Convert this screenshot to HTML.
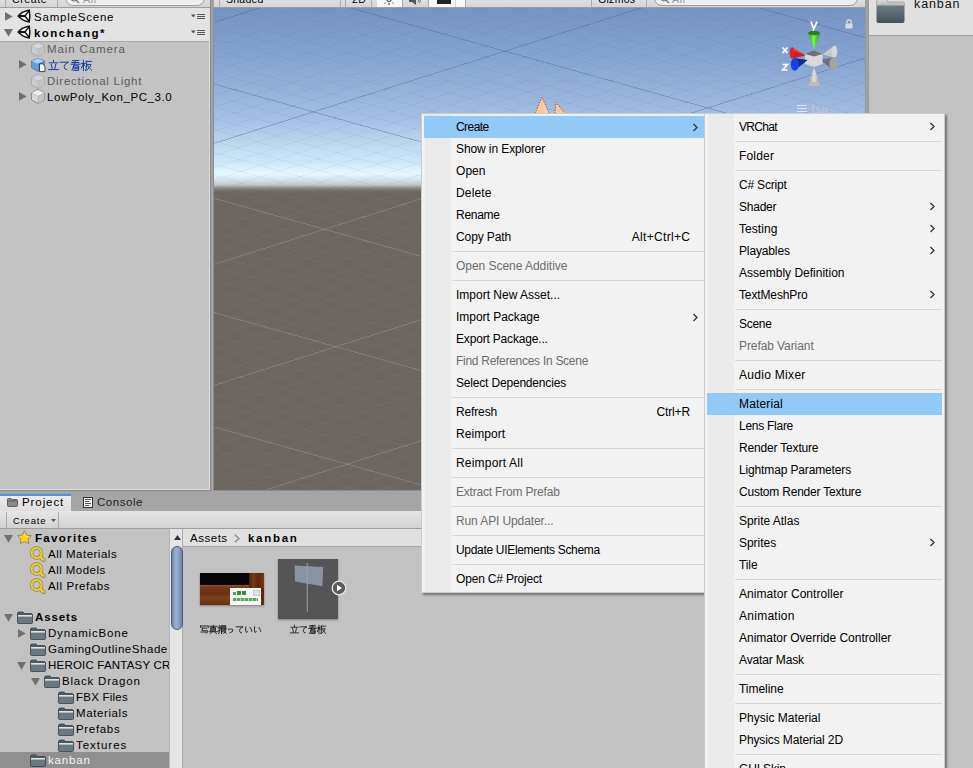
<!DOCTYPE html>
<html><head><meta charset="utf-8"><style>
*{margin:0;padding:0;box-sizing:border-box}
html,body{width:973px;height:768px;overflow:hidden;background:#A2A2A2;font-family:"Liberation Sans",sans-serif;font-size:11px;color:#000;position:relative}
.a{position:absolute}
.t{position:absolute;white-space:nowrap;font-size:11.5px;letter-spacing:0.75px;line-height:16px;height:16px}
.b{font-weight:bold;letter-spacing:1.25px}
.menu{position:absolute;background:#F2F2F2;border:1px solid #CCCCCC;box-shadow:2px 2px 2px rgba(0,0,0,0.4)}
.mi{position:absolute;height:22px;font-size:12px;line-height:22px;color:#000;white-space:nowrap;letter-spacing:-0.15px}
.mi .tx{position:absolute;left:32px;top:0}
.mi.hl{background:#91C9F7}
.mi.dis{color:#6D6D6D}
.mi .sc{position:absolute;right:15px;top:0}
.mi svg{position:absolute;right:5px;top:7px}
.sep{position:absolute;height:1px;background:#D7D7D7}
svg.i{position:absolute;overflow:visible}
</style></head><body>
<div class="a" style="left:0px;top:0px;width:210px;height:8px;background:linear-gradient(#dfdfdf,#d3d3d3);border-bottom:1px solid #9d9d9d"></div>
<div class="a" style="left:5px;top:0px;width:1px;height:7px;background:#aaa"></div>
<div class="a" style="left:57px;top:0px;width:1px;height:7px;background:#aaa"></div>
<div class="t" style="left:12px;top:-9px;font-size:10.5px;letter-spacing:0.6px">Create</div>
<div class="a" style="left:65px;top:-12px;width:140px;height:18px;background:#eeeeee;border:1px solid #a0a0a0;border-radius:8px"></div>
<div class="t" style="left:83px;top:-9px;color:#9a9a9a;font-size:10.5px">All</div>
<svg class="i" style="left:70px;top:-6px" width="10" height="10" viewBox="0 0 10 10" ><circle cx="4" cy="4" r="3" fill="none" stroke="#777" stroke-width="1.2"/><path d="M6 6 L9 9" stroke="#777" stroke-width="1.3"/></svg>
<div class="a" style="left:214px;top:0px;width:651px;height:8px;background:linear-gradient(#dfdfdf,#d3d3d3);border-bottom:1px solid #9d9d9d"></div>
<div class="a" style="left:219px;top:0px;width:1px;height:7px;background:#a9a9a9"></div>
<div class="a" style="left:340px;top:0px;width:1px;height:7px;background:#a9a9a9"></div>
<div class="a" style="left:345px;top:0px;width:1px;height:7px;background:#a9a9a9"></div>
<div class="a" style="left:371px;top:0px;width:1px;height:7px;background:#a9a9a9"></div>
<div class="a" style="left:402px;top:0px;width:1px;height:7px;background:#a9a9a9"></div>
<div class="a" style="left:428px;top:0px;width:1px;height:7px;background:#a9a9a9"></div>
<div class="a" style="left:465px;top:0px;width:1px;height:7px;background:#a9a9a9"></div>
<div class="a" style="left:591px;top:0px;width:1px;height:7px;background:#a9a9a9"></div>
<div class="a" style="left:646px;top:0px;width:1px;height:7px;background:#a9a9a9"></div>
<div class="t" style="left:226px;top:-9px;font-size:10.5px;letter-spacing:0.25px">Shaded</div>
<div class="t" style="left:352px;top:-9px;font-size:10.5px;letter-spacing:0.5px">2D</div>
<div class="a" style="left:377px;top:0px;width:25px;height:7px;background:#f7f7f7"></div>
<svg class="i" style="left:383px;top:-4px" width="12" height="10" viewBox="0 0 12 10" ><circle cx="6" cy="3" r="2.5" fill="none" stroke="#333" stroke-width="1"/><path d="M6 7V9 M1 3H0 M12 3H11 M2.5 6.5L1.5 7.5 M9.5 6.5L10.5 7.5" stroke="#333" stroke-width="1"/></svg>
<svg class="i" style="left:408px;top:-4px" width="14" height="10" viewBox="0 0 14 10" ><path d="M1 0 H4 L8 -3 V9 L4 6 H1Z" fill="#555"/><path d="M10 0 Q12 3 10 6 M11.5 -1 Q14 3 11.5 7" stroke="#777" fill="none" stroke-width="1"/></svg>
<div class="a" style="left:429px;top:0px;width:36px;height:7px;background:#f7f7f7"></div>
<div class="a" style="left:437px;top:0px;width:14px;height:4px;background:#222"></div>
<div class="a" style="left:455px;top:0px;width:1px;height:7px;background:#d8d8d8"></div>
<div class="t" style="left:598px;top:-9px;font-size:10.5px;letter-spacing:0.3px">Gizmos</div>
<div class="a" style="left:654px;top:-12px;width:204px;height:18px;background:#eeeeee;border:1px solid #a0a0a0;border-radius:8px"></div>
<svg class="i" style="left:660px;top:-6px" width="10" height="10" viewBox="0 0 10 10" ><circle cx="4" cy="4" r="3" fill="none" stroke="#777" stroke-width="1.2"/><path d="M6 6 L9 9" stroke="#777" stroke-width="1.3"/></svg>
<div class="t" style="left:672px;top:-9px;color:#9a9a9a;font-size:10.5px">All</div>
<div class="a" style="left:0px;top:8px;width:210px;height:482px;background:#C3C3C3"></div>
<div class="a" style="left:0px;top:8px;width:210px;height:33px;background:#E3E3E3"></div>
<div class="a" style="left:0px;top:41px;width:210px;height:1px;background:#A9A9A9"></div>
<div class="a" style="left:209px;top:8px;width:1px;height:481px;background:#DCDCDC"></div>
<div class="a" style="left:0px;top:489px;width:210px;height:1px;background:#DCDCDC"></div>
<svg class="i" style="left:5px;top:12px" width="8" height="9" viewBox="0 0 8 9" ><path d="M0 0 L7.7 4.4 L0 8.8Z" fill="#707070"/></svg>
<svg class="i" style="left:17px;top:9px" width="14" height="14" viewBox="0 0 14 14" ><path d="M0.2 7 Q4.5 1.5 12.9 0.2 Q14.3 7 12.9 13.8 Q4.5 12.5 0.2 7Z" fill="#111"/><path d="M3.2 6.1 L7.7 6.1 L10.9 2.3 Q6.2 3 3.2 6.1Z" fill="#fff"/><path d="M3.2 7.9 L7.7 7.9 L10.9 11.7 Q6.2 11 3.2 7.9Z" fill="#fff"/><path d="M8.9 7 L11.7 3.2 Q12.5 7 11.7 10.8Z" fill="#fff"/></svg>
<div class="t" style="left:34px;top:9px;letter-spacing:0.9px;letter-spacing:0.790px">SampleScene</div>
<svg class="i" style="left:4px;top:29px" width="9" height="8" viewBox="0 0 9 8" ><path d="M0 0 L9 0 L4.5 7.8Z" fill="#707070"/></svg>
<svg class="i" style="left:17px;top:25px" width="14" height="14" viewBox="0 0 14 14" ><path d="M0.2 7 Q4.5 1.5 12.9 0.2 Q14.3 7 12.9 13.8 Q4.5 12.5 0.2 7Z" fill="#111"/><path d="M3.2 6.1 L7.7 6.1 L10.9 2.3 Q6.2 3 3.2 6.1Z" fill="#fff"/><path d="M3.2 7.9 L7.7 7.9 L10.9 11.7 Q6.2 11 3.2 7.9Z" fill="#fff"/><path d="M8.9 7 L11.7 3.2 Q12.5 7 11.7 10.8Z" fill="#fff"/></svg>
<div class="t b" style="left:34px;top:25px;letter-spacing:1.65px;letter-spacing:1.450px">konchang*</div>
<svg class="i" style="left:191px;top:14px" width="5" height="4" viewBox="0 0 5 4" ><path d="M0 0.6 H4.6 L2.3 3.6Z" fill="#555"/></svg>
<div class="a" style="left:197px;top:14px;width:8px;height:1px;background:#585858"></div>
<div class="a" style="left:197px;top:16px;width:8px;height:1px;background:#585858"></div>
<div class="a" style="left:197px;top:18px;width:8px;height:1px;background:#585858"></div>
<svg class="i" style="left:191px;top:30px" width="5" height="4" viewBox="0 0 5 4" ><path d="M0 0.6 H4.6 L2.3 3.6Z" fill="#555"/></svg>
<div class="a" style="left:197px;top:30px;width:8px;height:1px;background:#585858"></div>
<div class="a" style="left:197px;top:32px;width:8px;height:1px;background:#585858"></div>
<div class="a" style="left:197px;top:34px;width:8px;height:1px;background:#585858"></div>
<svg class="i" style="left:31px;top:42px" width="14" height="15" viewBox="0 0 14 15" ><g opacity="0.45"><path d="M7 0.5 L13.5 3.8 L13.5 11 L7 14.5 L0.5 11 L0.5 3.8Z" fill="#d9d9d9" stroke="#8c8c8c" stroke-width="1"/><path d="M0.8 4 L7 7.2 L13.2 4 L7 0.9Z" fill="#efefef"/><path d="M7 7.2 L13.2 4 L13.2 10.9 L7 14.1Z" fill="#c4c4c4"/><path d="M0.8 4 L7 7.2 L13.2 4 M7 7.2 V14" stroke="#a8a8a8" stroke-width="0.6" fill="none"/></g></svg>
<div class="t" style="left:47px;top:41px;color:#5c5c5c;letter-spacing:0.880px">Main Camera</div>
<svg class="i" style="left:19px;top:60px" width="8" height="9" viewBox="0 0 8 9" ><path d="M0 0 L7.7 4.4 L0 8.8Z" fill="#707070"/></svg>
<svg class="i" style="left:31px;top:57px" width="14" height="15" viewBox="0 0 14 15" ><path d="M7 1.5 L13.5 3.8 L13.5 11 L7 14.5 L0.5 11 L0.5 3.8Z" fill="#5ca2e2" stroke="#6f7f90" stroke-width="0.9"/><path d="M0.8 4 L7 6.8 L13.2 4 L7 1.7Z" fill="#a8d6fb"/><path d="M7 6.8 L13.2 4 L13.2 10.9 L7 14.1Z" fill="#4d8fd6"/><path d="M8.5 6.8 H11.6 L14 9.2 V14.6 H8.5Z" fill="#f2f4f4" stroke="#444" stroke-width="1"/></svg>
<svg class="i" style="left:48px;top:60px" width="46" height="12" viewBox="0 0 46 12" ><path transform="translate(0.00,0) scale(1.000)" d="M5.5 0.3V2 M1.2 2.8H9.8 M3.2 4.4L4.2 8.6 M7.8 4.4L6.8 8.6 M0.6 9.6H10.4" fill="none" stroke="#1c3ea4" stroke-width="1.0" stroke-linecap="square"/><path transform="translate(11.00,0) scale(1.000)" d="M1.2 2.2H9.6 Q5.6 3.4 5.2 6.5 Q5 9.4 7.6 9.8" fill="none" stroke="#1c3ea4" stroke-width="1.0" stroke-linecap="square"/><path transform="translate(22.00,0) scale(1.000)" d="M2.4 0.8L8.8 0.4 M2 2.5H9 M1 4.2H10 M5.6 1L2 10.4 M3.8 5.8H8.6V10.4H3.8 M3.8 7.3H8.6 M3.8 8.8H8.6" fill="none" stroke="#1c3ea4" stroke-width="1.0" stroke-linecap="square"/><path transform="translate(33.00,0) scale(1.000)" d="M0.4 3.4H4.4 M2.4 0.4V10.6 M2.4 3.8L0.4 8 M2.6 4L4.4 6.2 M5 1.4H10.6 M5.6 1.4V5.6Q5.5 8.5 4.6 10.4 M5.8 4.6H10Q9 8 5.6 10.4 M6.8 5.8Q8.6 8.6 10.6 10.2" fill="none" stroke="#1c3ea4" stroke-width="1.0" stroke-linecap="square"/></svg>
<svg class="i" style="left:31px;top:74px" width="14" height="15" viewBox="0 0 14 15" ><g opacity="0.45"><path d="M7 0.5 L13.5 3.8 L13.5 11 L7 14.5 L0.5 11 L0.5 3.8Z" fill="#d9d9d9" stroke="#8c8c8c" stroke-width="1"/><path d="M0.8 4 L7 7.2 L13.2 4 L7 0.9Z" fill="#efefef"/><path d="M7 7.2 L13.2 4 L13.2 10.9 L7 14.1Z" fill="#c4c4c4"/><path d="M0.8 4 L7 7.2 L13.2 4 M7 7.2 V14" stroke="#a8a8a8" stroke-width="0.6" fill="none"/></g></svg>
<div class="t" style="left:47px;top:73px;color:#5c5c5c;letter-spacing:0.750px">Directional Light</div>
<svg class="i" style="left:19px;top:92px" width="8" height="9" viewBox="0 0 8 9" ><path d="M0 0 L7.7 4.4 L0 8.8Z" fill="#707070"/></svg>
<svg class="i" style="left:31px;top:89px" width="14" height="15" viewBox="0 0 14 15" ><g opacity="1"><path d="M7 0.5 L13.5 3.8 L13.5 11 L7 14.5 L0.5 11 L0.5 3.8Z" fill="#d9d9d9" stroke="#8c8c8c" stroke-width="1"/><path d="M0.8 4 L7 7.2 L13.2 4 L7 0.9Z" fill="#efefef"/><path d="M7 7.2 L13.2 4 L13.2 10.9 L7 14.1Z" fill="#c4c4c4"/><path d="M0.8 4 L7 7.2 L13.2 4 M7 7.2 V14" stroke="#a8a8a8" stroke-width="0.6" fill="none"/></g></svg>
<div class="t" style="left:47px;top:89px;;letter-spacing:0.565px">LowPoly_Kon_PC_3.0</div>
<div class="a" style="left:214px;top:8px;width:651px;height:482px;overflow:hidden;background:linear-gradient(#7694c3 0px,#86a4d2 52px,#a4c0e4 112px,#c4dcf4 142px,#cce4f8 152px,#e6f8ff 166px,#dceaf0 170px,#ccd8dc 174px,#bcc6c8 177px,#9c9c9c 179px,#847e7a 181px,#716c68 183px,#6c6661 185px,#6c6661 482px)">
<svg width="651" height="482" style="position:absolute;left:0;top:0"><defs><clipPath id="csky"><rect x="0" y="0" width="651" height="179"/></clipPath><clipPath id="cgnd"><rect x="0" y="179" width="651" height="320"/></clipPath></defs>
<g clip-path="url(#csky)">
<g stroke="#475a78" stroke-width="1" opacity="0.06" shape-rendering="crispEdges"><line x1="0" y1="-1398.47" x2="651" y2="-1216.19"/><line x1="0" y1="-1387.04" x2="651" y2="-1204.76"/><line x1="0" y1="-1375.61" x2="651" y2="-1193.33"/><line x1="0" y1="-1364.18" x2="651" y2="-1181.90"/><line x1="0" y1="-1352.75" x2="651" y2="-1170.47"/><line x1="0" y1="-1341.32" x2="651" y2="-1159.04"/><line x1="0" y1="-1329.89" x2="651" y2="-1147.61"/><line x1="0" y1="-1318.46" x2="651" y2="-1136.18"/><line x1="0" y1="-1307.03" x2="651" y2="-1124.75"/><line x1="0" y1="-1284.17" x2="651" y2="-1101.89"/><line x1="0" y1="-1272.74" x2="651" y2="-1090.46"/><line x1="0" y1="-1261.31" x2="651" y2="-1079.03"/><line x1="0" y1="-1249.88" x2="651" y2="-1067.60"/><line x1="0" y1="-1238.45" x2="651" y2="-1056.17"/><line x1="0" y1="-1227.02" x2="651" y2="-1044.74"/><line x1="0" y1="-1215.59" x2="651" y2="-1033.31"/><line x1="0" y1="-1204.16" x2="651" y2="-1021.88"/><line x1="0" y1="-1192.73" x2="651" y2="-1010.45"/><line x1="0" y1="-1169.87" x2="651" y2="-987.59"/><line x1="0" y1="-1158.44" x2="651" y2="-976.16"/><line x1="0" y1="-1147.01" x2="651" y2="-964.73"/><line x1="0" y1="-1135.58" x2="651" y2="-953.30"/><line x1="0" y1="-1124.15" x2="651" y2="-941.87"/><line x1="0" y1="-1112.72" x2="651" y2="-930.44"/><line x1="0" y1="-1101.29" x2="651" y2="-919.01"/><line x1="0" y1="-1089.86" x2="651" y2="-907.58"/><line x1="0" y1="-1078.43" x2="651" y2="-896.15"/><line x1="0" y1="-1055.57" x2="651" y2="-873.29"/><line x1="0" y1="-1044.14" x2="651" y2="-861.86"/><line x1="0" y1="-1032.71" x2="651" y2="-850.43"/><line x1="0" y1="-1021.28" x2="651" y2="-839.00"/><line x1="0" y1="-1009.85" x2="651" y2="-827.57"/><line x1="0" y1="-998.42" x2="651" y2="-816.14"/><line x1="0" y1="-986.99" x2="651" y2="-804.71"/><line x1="0" y1="-975.56" x2="651" y2="-793.28"/><line x1="0" y1="-964.13" x2="651" y2="-781.85"/><line x1="0" y1="-941.27" x2="651" y2="-758.99"/><line x1="0" y1="-929.84" x2="651" y2="-747.56"/><line x1="0" y1="-918.41" x2="651" y2="-736.13"/><line x1="0" y1="-906.98" x2="651" y2="-724.70"/><line x1="0" y1="-895.55" x2="651" y2="-713.27"/><line x1="0" y1="-884.12" x2="651" y2="-701.84"/><line x1="0" y1="-872.69" x2="651" y2="-690.41"/><line x1="0" y1="-861.26" x2="651" y2="-678.98"/><line x1="0" y1="-849.83" x2="651" y2="-667.55"/><line x1="0" y1="-826.97" x2="651" y2="-644.69"/><line x1="0" y1="-815.54" x2="651" y2="-633.26"/><line x1="0" y1="-804.11" x2="651" y2="-621.83"/><line x1="0" y1="-792.68" x2="651" y2="-610.40"/><line x1="0" y1="-781.25" x2="651" y2="-598.97"/><line x1="0" y1="-769.82" x2="651" y2="-587.54"/><line x1="0" y1="-758.39" x2="651" y2="-576.11"/><line x1="0" y1="-746.96" x2="651" y2="-564.68"/><line x1="0" y1="-735.53" x2="651" y2="-553.25"/><line x1="0" y1="-712.67" x2="651" y2="-530.39"/><line x1="0" y1="-701.24" x2="651" y2="-518.96"/><line x1="0" y1="-689.81" x2="651" y2="-507.53"/><line x1="0" y1="-678.38" x2="651" y2="-496.10"/><line x1="0" y1="-666.95" x2="651" y2="-484.67"/><line x1="0" y1="-655.52" x2="651" y2="-473.24"/><line x1="0" y1="-644.09" x2="651" y2="-461.81"/><line x1="0" y1="-632.66" x2="651" y2="-450.38"/><line x1="0" y1="-621.23" x2="651" y2="-438.95"/><line x1="0" y1="-598.37" x2="651" y2="-416.09"/><line x1="0" y1="-586.94" x2="651" y2="-404.66"/><line x1="0" y1="-575.51" x2="651" y2="-393.23"/><line x1="0" y1="-564.08" x2="651" y2="-381.80"/><line x1="0" y1="-552.65" x2="651" y2="-370.37"/><line x1="0" y1="-541.22" x2="651" y2="-358.94"/><line x1="0" y1="-529.79" x2="651" y2="-347.51"/><line x1="0" y1="-518.36" x2="651" y2="-336.08"/><line x1="0" y1="-506.93" x2="651" y2="-324.65"/><line x1="0" y1="-484.07" x2="651" y2="-301.79"/><line x1="0" y1="-472.64" x2="651" y2="-290.36"/><line x1="0" y1="-461.21" x2="651" y2="-278.93"/><line x1="0" y1="-449.78" x2="651" y2="-267.50"/><line x1="0" y1="-438.35" x2="651" y2="-256.07"/><line x1="0" y1="-426.92" x2="651" y2="-244.64"/><line x1="0" y1="-415.49" x2="651" y2="-233.21"/><line x1="0" y1="-404.06" x2="651" y2="-221.78"/><line x1="0" y1="-392.63" x2="651" y2="-210.35"/><line x1="0" y1="-369.77" x2="651" y2="-187.49"/><line x1="0" y1="-358.34" x2="651" y2="-176.06"/><line x1="0" y1="-346.91" x2="651" y2="-164.63"/><line x1="0" y1="-335.48" x2="651" y2="-153.20"/><line x1="0" y1="-324.05" x2="651" y2="-141.77"/><line x1="0" y1="-312.62" x2="651" y2="-130.34"/><line x1="0" y1="-301.19" x2="651" y2="-118.91"/><line x1="0" y1="-289.76" x2="651" y2="-107.48"/><line x1="0" y1="-278.33" x2="651" y2="-96.05"/><line x1="0" y1="-255.47" x2="651" y2="-73.19"/><line x1="0" y1="-244.04" x2="651" y2="-61.76"/><line x1="0" y1="-232.61" x2="651" y2="-50.33"/><line x1="0" y1="-221.18" x2="651" y2="-38.90"/><line x1="0" y1="-209.75" x2="651" y2="-27.47"/><line x1="0" y1="-198.32" x2="651" y2="-16.04"/><line x1="0" y1="-186.89" x2="651" y2="-4.61"/><line x1="0" y1="-175.46" x2="651" y2="6.82"/><line x1="0" y1="-164.03" x2="651" y2="18.25"/><line x1="0" y1="-141.17" x2="651" y2="41.11"/><line x1="0" y1="-129.74" x2="651" y2="52.54"/><line x1="0" y1="-118.31" x2="651" y2="63.97"/><line x1="0" y1="-106.88" x2="651" y2="75.40"/><line x1="0" y1="-95.45" x2="651" y2="86.83"/><line x1="0" y1="-84.02" x2="651" y2="98.26"/><line x1="0" y1="-72.59" x2="651" y2="109.69"/><line x1="0" y1="-61.16" x2="651" y2="121.12"/><line x1="0" y1="-49.73" x2="651" y2="132.55"/><line x1="0" y1="-26.87" x2="651" y2="155.41"/><line x1="0" y1="-15.44" x2="651" y2="166.84"/><line x1="0" y1="-4.01" x2="651" y2="178.27"/><line x1="0" y1="7.42" x2="651" y2="189.70"/><line x1="0" y1="18.85" x2="651" y2="201.13"/><line x1="0" y1="30.28" x2="651" y2="212.56"/><line x1="0" y1="41.71" x2="651" y2="223.99"/><line x1="0" y1="53.14" x2="651" y2="235.42"/><line x1="0" y1="64.57" x2="651" y2="246.85"/><line x1="0" y1="87.43" x2="651" y2="269.71"/><line x1="0" y1="98.86" x2="651" y2="281.14"/><line x1="0" y1="110.29" x2="651" y2="292.57"/><line x1="0" y1="121.72" x2="651" y2="304.00"/><line x1="0" y1="133.15" x2="651" y2="315.43"/><line x1="0" y1="144.58" x2="651" y2="326.86"/><line x1="0" y1="156.01" x2="651" y2="338.29"/><line x1="0" y1="167.44" x2="651" y2="349.72"/><line x1="0" y1="178.87" x2="651" y2="361.15"/><line x1="0" y1="201.73" x2="651" y2="384.01"/><line x1="0" y1="213.16" x2="651" y2="395.44"/><line x1="0" y1="224.59" x2="651" y2="406.87"/><line x1="0" y1="236.02" x2="651" y2="418.30"/><line x1="0" y1="247.45" x2="651" y2="429.73"/><line x1="0" y1="258.88" x2="651" y2="441.16"/><line x1="0" y1="270.31" x2="651" y2="452.59"/><line x1="0" y1="281.74" x2="651" y2="464.02"/><line x1="0" y1="293.17" x2="651" y2="475.45"/><line x1="0" y1="316.03" x2="651" y2="498.31"/><line x1="0" y1="327.46" x2="651" y2="509.74"/><line x1="0" y1="338.89" x2="651" y2="521.17"/><line x1="0" y1="350.32" x2="651" y2="532.60"/><line x1="0" y1="361.75" x2="651" y2="544.03"/><line x1="0" y1="373.18" x2="651" y2="555.46"/><line x1="0" y1="384.61" x2="651" y2="566.89"/><line x1="0" y1="396.04" x2="651" y2="578.32"/><line x1="0" y1="407.47" x2="651" y2="589.75"/><line x1="0" y1="430.33" x2="651" y2="612.61"/><line x1="0" y1="441.76" x2="651" y2="624.04"/><line x1="0" y1="453.19" x2="651" y2="635.47"/><line x1="0" y1="464.62" x2="651" y2="646.90"/><line x1="0" y1="476.05" x2="651" y2="658.33"/><line x1="0" y1="487.48" x2="651" y2="669.76"/><line x1="0" y1="498.91" x2="651" y2="681.19"/><line x1="0" y1="510.34" x2="651" y2="692.62"/><line x1="0" y1="521.77" x2="651" y2="704.05"/><line x1="0" y1="544.63" x2="651" y2="726.91"/><line x1="0" y1="556.06" x2="651" y2="738.34"/><line x1="0" y1="567.49" x2="651" y2="749.77"/><line x1="0" y1="578.92" x2="651" y2="761.20"/><line x1="0" y1="590.35" x2="651" y2="772.63"/><line x1="0" y1="601.78" x2="651" y2="784.06"/><line x1="0" y1="613.21" x2="651" y2="795.49"/><line x1="0" y1="624.64" x2="651" y2="806.92"/><line x1="0" y1="636.07" x2="651" y2="818.35"/><line x1="0" y1="658.93" x2="651" y2="841.21"/><line x1="0" y1="670.36" x2="651" y2="852.64"/><line x1="0" y1="681.79" x2="651" y2="864.07"/><line x1="0" y1="693.22" x2="651" y2="875.50"/><line x1="0" y1="704.65" x2="651" y2="886.93"/><line x1="0" y1="716.08" x2="651" y2="898.36"/><line x1="0" y1="727.51" x2="651" y2="909.79"/><line x1="0" y1="738.94" x2="651" y2="921.22"/><line x1="0" y1="750.37" x2="651" y2="932.65"/><line x1="0" y1="773.23" x2="651" y2="955.51"/><line x1="0" y1="784.66" x2="651" y2="966.94"/><line x1="0" y1="796.09" x2="651" y2="978.37"/><line x1="0" y1="807.52" x2="651" y2="989.80"/><line x1="0" y1="818.95" x2="651" y2="1001.23"/><line x1="0" y1="830.38" x2="651" y2="1012.66"/><line x1="0" y1="841.81" x2="651" y2="1024.09"/><line x1="0" y1="853.24" x2="651" y2="1035.52"/><line x1="0" y1="864.67" x2="651" y2="1046.95"/><line x1="0" y1="887.53" x2="651" y2="1069.81"/><line x1="0" y1="898.96" x2="651" y2="1081.24"/><line x1="0" y1="910.39" x2="651" y2="1092.67"/><line x1="0" y1="921.82" x2="651" y2="1104.10"/><line x1="0" y1="933.25" x2="651" y2="1115.53"/><line x1="0" y1="944.68" x2="651" y2="1126.96"/><line x1="0" y1="956.11" x2="651" y2="1138.39"/><line x1="0" y1="967.54" x2="651" y2="1149.82"/><line x1="0" y1="978.97" x2="651" y2="1161.25"/><line x1="0" y1="1001.83" x2="651" y2="1184.11"/><line x1="0" y1="1013.26" x2="651" y2="1195.54"/><line x1="0" y1="1024.69" x2="651" y2="1206.97"/><line x1="0" y1="1036.12" x2="651" y2="1218.40"/><line x1="0" y1="1047.55" x2="651" y2="1229.83"/><line x1="0" y1="1058.98" x2="651" y2="1241.26"/><line x1="0" y1="1070.41" x2="651" y2="1252.69"/><line x1="0" y1="1081.84" x2="651" y2="1264.12"/><line x1="0" y1="1093.27" x2="651" y2="1275.55"/><line x1="0" y1="1116.13" x2="651" y2="1298.41"/><line x1="0" y1="1127.56" x2="651" y2="1309.84"/><line x1="0" y1="1138.99" x2="651" y2="1321.27"/><line x1="0" y1="1150.42" x2="651" y2="1332.70"/><line x1="0" y1="1161.85" x2="651" y2="1344.13"/><line x1="0" y1="1173.28" x2="651" y2="1355.56"/><line x1="0" y1="1184.71" x2="651" y2="1366.99"/><line x1="0" y1="1196.14" x2="651" y2="1378.42"/><line x1="0" y1="1207.57" x2="651" y2="1389.85"/><line x1="0" y1="1230.43" x2="651" y2="1412.71"/><line x1="0" y1="1241.86" x2="651" y2="1424.14"/><line x1="0" y1="1253.29" x2="651" y2="1435.57"/><line x1="0" y1="1264.72" x2="651" y2="1447.00"/><line x1="0" y1="1276.15" x2="651" y2="1458.43"/><line x1="0" y1="1287.58" x2="651" y2="1469.86"/><line x1="0" y1="1299.01" x2="651" y2="1481.29"/><line x1="0" y1="1310.44" x2="651" y2="1492.72"/><line x1="0" y1="1321.87" x2="651" y2="1504.15"/><line x1="0" y1="1344.73" x2="651" y2="1527.01"/><line x1="0" y1="1356.16" x2="651" y2="1538.44"/><line x1="0" y1="1367.59" x2="651" y2="1549.87"/><line x1="0" y1="1379.02" x2="651" y2="1561.30"/><line x1="0" y1="1390.45" x2="651" y2="1572.73"/><line x1="0" y1="1401.88" x2="651" y2="1584.16"/><line x1="0" y1="1413.31" x2="651" y2="1595.59"/><line x1="0" y1="1424.74" x2="651" y2="1607.02"/><line x1="0" y1="1436.17" x2="651" y2="1618.45"/><line x1="0" y1="1459.03" x2="651" y2="1641.31"/><line x1="0" y1="1470.46" x2="651" y2="1652.74"/><line x1="0" y1="1481.89" x2="651" y2="1664.17"/><line x1="0" y1="1493.32" x2="651" y2="1675.60"/><line x1="0" y1="1504.75" x2="651" y2="1687.03"/><line x1="0" y1="1516.18" x2="651" y2="1698.46"/><line x1="0" y1="1527.61" x2="651" y2="1709.89"/><line x1="0" y1="1539.04" x2="651" y2="1721.32"/><line x1="0" y1="1550.47" x2="651" y2="1732.75"/><line x1="0" y1="1573.33" x2="651" y2="1755.61"/><line x1="0" y1="1584.76" x2="651" y2="1767.04"/><line x1="0" y1="1596.19" x2="651" y2="1778.47"/><line x1="0" y1="1607.62" x2="651" y2="1789.90"/><line x1="0" y1="1619.05" x2="651" y2="1801.33"/><line x1="0" y1="1630.48" x2="651" y2="1812.76"/><line x1="0" y1="1641.91" x2="651" y2="1824.19"/><line x1="0" y1="1653.34" x2="651" y2="1835.62"/><line x1="0" y1="1664.77" x2="651" y2="1847.05"/><line x1="0" y1="1687.63" x2="651" y2="1869.91"/><line x1="0" y1="1699.06" x2="651" y2="1881.34"/><line x1="0" y1="1710.49" x2="651" y2="1892.77"/><line x1="0" y1="1721.92" x2="651" y2="1904.20"/><line x1="0" y1="1733.35" x2="651" y2="1915.63"/><line x1="0" y1="1744.78" x2="651" y2="1927.06"/><line x1="0" y1="1756.21" x2="651" y2="1938.49"/><line x1="0" y1="1767.64" x2="651" y2="1949.92"/><line x1="0" y1="1779.07" x2="651" y2="1961.35"/></g>
<g stroke="#475a78" stroke-width="1" opacity="0.06" shape-rendering="crispEdges"><line x1="0" y1="-1425.50" x2="651" y2="-1631.87"/><line x1="0" y1="-1413.40" x2="651" y2="-1619.77"/><line x1="0" y1="-1401.30" x2="651" y2="-1607.67"/><line x1="0" y1="-1389.20" x2="651" y2="-1595.57"/><line x1="0" y1="-1377.10" x2="651" y2="-1583.47"/><line x1="0" y1="-1365.00" x2="651" y2="-1571.37"/><line x1="0" y1="-1352.90" x2="651" y2="-1559.27"/><line x1="0" y1="-1340.80" x2="651" y2="-1547.17"/><line x1="0" y1="-1328.70" x2="651" y2="-1535.07"/><line x1="0" y1="-1304.50" x2="651" y2="-1510.87"/><line x1="0" y1="-1292.40" x2="651" y2="-1498.77"/><line x1="0" y1="-1280.30" x2="651" y2="-1486.67"/><line x1="0" y1="-1268.20" x2="651" y2="-1474.57"/><line x1="0" y1="-1256.10" x2="651" y2="-1462.47"/><line x1="0" y1="-1244.00" x2="651" y2="-1450.37"/><line x1="0" y1="-1231.90" x2="651" y2="-1438.27"/><line x1="0" y1="-1219.80" x2="651" y2="-1426.17"/><line x1="0" y1="-1207.70" x2="651" y2="-1414.07"/><line x1="0" y1="-1183.50" x2="651" y2="-1389.87"/><line x1="0" y1="-1171.40" x2="651" y2="-1377.77"/><line x1="0" y1="-1159.30" x2="651" y2="-1365.67"/><line x1="0" y1="-1147.20" x2="651" y2="-1353.57"/><line x1="0" y1="-1135.10" x2="651" y2="-1341.47"/><line x1="0" y1="-1123.00" x2="651" y2="-1329.37"/><line x1="0" y1="-1110.90" x2="651" y2="-1317.27"/><line x1="0" y1="-1098.80" x2="651" y2="-1305.17"/><line x1="0" y1="-1086.70" x2="651" y2="-1293.07"/><line x1="0" y1="-1062.50" x2="651" y2="-1268.87"/><line x1="0" y1="-1050.40" x2="651" y2="-1256.77"/><line x1="0" y1="-1038.30" x2="651" y2="-1244.67"/><line x1="0" y1="-1026.20" x2="651" y2="-1232.57"/><line x1="0" y1="-1014.10" x2="651" y2="-1220.47"/><line x1="0" y1="-1002.00" x2="651" y2="-1208.37"/><line x1="0" y1="-989.90" x2="651" y2="-1196.27"/><line x1="0" y1="-977.80" x2="651" y2="-1184.17"/><line x1="0" y1="-965.70" x2="651" y2="-1172.07"/><line x1="0" y1="-941.50" x2="651" y2="-1147.87"/><line x1="0" y1="-929.40" x2="651" y2="-1135.77"/><line x1="0" y1="-917.30" x2="651" y2="-1123.67"/><line x1="0" y1="-905.20" x2="651" y2="-1111.57"/><line x1="0" y1="-893.10" x2="651" y2="-1099.47"/><line x1="0" y1="-881.00" x2="651" y2="-1087.37"/><line x1="0" y1="-868.90" x2="651" y2="-1075.27"/><line x1="0" y1="-856.80" x2="651" y2="-1063.17"/><line x1="0" y1="-844.70" x2="651" y2="-1051.07"/><line x1="0" y1="-820.50" x2="651" y2="-1026.87"/><line x1="0" y1="-808.40" x2="651" y2="-1014.77"/><line x1="0" y1="-796.30" x2="651" y2="-1002.67"/><line x1="0" y1="-784.20" x2="651" y2="-990.57"/><line x1="0" y1="-772.10" x2="651" y2="-978.47"/><line x1="0" y1="-760.00" x2="651" y2="-966.37"/><line x1="0" y1="-747.90" x2="651" y2="-954.27"/><line x1="0" y1="-735.80" x2="651" y2="-942.17"/><line x1="0" y1="-723.70" x2="651" y2="-930.07"/><line x1="0" y1="-699.50" x2="651" y2="-905.87"/><line x1="0" y1="-687.40" x2="651" y2="-893.77"/><line x1="0" y1="-675.30" x2="651" y2="-881.67"/><line x1="0" y1="-663.20" x2="651" y2="-869.57"/><line x1="0" y1="-651.10" x2="651" y2="-857.47"/><line x1="0" y1="-639.00" x2="651" y2="-845.37"/><line x1="0" y1="-626.90" x2="651" y2="-833.27"/><line x1="0" y1="-614.80" x2="651" y2="-821.17"/><line x1="0" y1="-602.70" x2="651" y2="-809.07"/><line x1="0" y1="-578.50" x2="651" y2="-784.87"/><line x1="0" y1="-566.40" x2="651" y2="-772.77"/><line x1="0" y1="-554.30" x2="651" y2="-760.67"/><line x1="0" y1="-542.20" x2="651" y2="-748.57"/><line x1="0" y1="-530.10" x2="651" y2="-736.47"/><line x1="0" y1="-518.00" x2="651" y2="-724.37"/><line x1="0" y1="-505.90" x2="651" y2="-712.27"/><line x1="0" y1="-493.80" x2="651" y2="-700.17"/><line x1="0" y1="-481.70" x2="651" y2="-688.07"/><line x1="0" y1="-457.50" x2="651" y2="-663.87"/><line x1="0" y1="-445.40" x2="651" y2="-651.77"/><line x1="0" y1="-433.30" x2="651" y2="-639.67"/><line x1="0" y1="-421.20" x2="651" y2="-627.57"/><line x1="0" y1="-409.10" x2="651" y2="-615.47"/><line x1="0" y1="-397.00" x2="651" y2="-603.37"/><line x1="0" y1="-384.90" x2="651" y2="-591.27"/><line x1="0" y1="-372.80" x2="651" y2="-579.17"/><line x1="0" y1="-360.70" x2="651" y2="-567.07"/><line x1="0" y1="-336.50" x2="651" y2="-542.87"/><line x1="0" y1="-324.40" x2="651" y2="-530.77"/><line x1="0" y1="-312.30" x2="651" y2="-518.67"/><line x1="0" y1="-300.20" x2="651" y2="-506.57"/><line x1="0" y1="-288.10" x2="651" y2="-494.47"/><line x1="0" y1="-276.00" x2="651" y2="-482.37"/><line x1="0" y1="-263.90" x2="651" y2="-470.27"/><line x1="0" y1="-251.80" x2="651" y2="-458.17"/><line x1="0" y1="-239.70" x2="651" y2="-446.07"/><line x1="0" y1="-215.50" x2="651" y2="-421.87"/><line x1="0" y1="-203.40" x2="651" y2="-409.77"/><line x1="0" y1="-191.30" x2="651" y2="-397.67"/><line x1="0" y1="-179.20" x2="651" y2="-385.57"/><line x1="0" y1="-167.10" x2="651" y2="-373.47"/><line x1="0" y1="-155.00" x2="651" y2="-361.37"/><line x1="0" y1="-142.90" x2="651" y2="-349.27"/><line x1="0" y1="-130.80" x2="651" y2="-337.17"/><line x1="0" y1="-118.70" x2="651" y2="-325.07"/><line x1="0" y1="-94.50" x2="651" y2="-300.87"/><line x1="0" y1="-82.40" x2="651" y2="-288.77"/><line x1="0" y1="-70.30" x2="651" y2="-276.67"/><line x1="0" y1="-58.20" x2="651" y2="-264.57"/><line x1="0" y1="-46.10" x2="651" y2="-252.47"/><line x1="0" y1="-34.00" x2="651" y2="-240.37"/><line x1="0" y1="-21.90" x2="651" y2="-228.27"/><line x1="0" y1="-9.80" x2="651" y2="-216.17"/><line x1="0" y1="2.30" x2="651" y2="-204.07"/><line x1="0" y1="26.50" x2="651" y2="-179.87"/><line x1="0" y1="38.60" x2="651" y2="-167.77"/><line x1="0" y1="50.70" x2="651" y2="-155.67"/><line x1="0" y1="62.80" x2="651" y2="-143.57"/><line x1="0" y1="74.90" x2="651" y2="-131.47"/><line x1="0" y1="87.00" x2="651" y2="-119.37"/><line x1="0" y1="99.10" x2="651" y2="-107.27"/><line x1="0" y1="111.20" x2="651" y2="-95.17"/><line x1="0" y1="123.30" x2="651" y2="-83.07"/><line x1="0" y1="147.50" x2="651" y2="-58.87"/><line x1="0" y1="159.60" x2="651" y2="-46.77"/><line x1="0" y1="171.70" x2="651" y2="-34.67"/><line x1="0" y1="183.80" x2="651" y2="-22.57"/><line x1="0" y1="195.90" x2="651" y2="-10.47"/><line x1="0" y1="208.00" x2="651" y2="1.63"/><line x1="0" y1="220.10" x2="651" y2="13.73"/><line x1="0" y1="232.20" x2="651" y2="25.83"/><line x1="0" y1="244.30" x2="651" y2="37.93"/><line x1="0" y1="268.50" x2="651" y2="62.13"/><line x1="0" y1="280.60" x2="651" y2="74.23"/><line x1="0" y1="292.70" x2="651" y2="86.33"/><line x1="0" y1="304.80" x2="651" y2="98.43"/><line x1="0" y1="316.90" x2="651" y2="110.53"/><line x1="0" y1="329.00" x2="651" y2="122.63"/><line x1="0" y1="341.10" x2="651" y2="134.73"/><line x1="0" y1="353.20" x2="651" y2="146.83"/><line x1="0" y1="365.30" x2="651" y2="158.93"/><line x1="0" y1="389.50" x2="651" y2="183.13"/><line x1="0" y1="401.60" x2="651" y2="195.23"/><line x1="0" y1="413.70" x2="651" y2="207.33"/><line x1="0" y1="425.80" x2="651" y2="219.43"/><line x1="0" y1="437.90" x2="651" y2="231.53"/><line x1="0" y1="450.00" x2="651" y2="243.63"/><line x1="0" y1="462.10" x2="651" y2="255.73"/><line x1="0" y1="474.20" x2="651" y2="267.83"/><line x1="0" y1="486.30" x2="651" y2="279.93"/><line x1="0" y1="510.50" x2="651" y2="304.13"/><line x1="0" y1="522.60" x2="651" y2="316.23"/><line x1="0" y1="534.70" x2="651" y2="328.33"/><line x1="0" y1="546.80" x2="651" y2="340.43"/><line x1="0" y1="558.90" x2="651" y2="352.53"/><line x1="0" y1="571.00" x2="651" y2="364.63"/><line x1="0" y1="583.10" x2="651" y2="376.73"/><line x1="0" y1="595.20" x2="651" y2="388.83"/><line x1="0" y1="607.30" x2="651" y2="400.93"/><line x1="0" y1="631.50" x2="651" y2="425.13"/><line x1="0" y1="643.60" x2="651" y2="437.23"/><line x1="0" y1="655.70" x2="651" y2="449.33"/><line x1="0" y1="667.80" x2="651" y2="461.43"/><line x1="0" y1="679.90" x2="651" y2="473.53"/><line x1="0" y1="692.00" x2="651" y2="485.63"/><line x1="0" y1="704.10" x2="651" y2="497.73"/><line x1="0" y1="716.20" x2="651" y2="509.83"/><line x1="0" y1="728.30" x2="651" y2="521.93"/><line x1="0" y1="752.50" x2="651" y2="546.13"/><line x1="0" y1="764.60" x2="651" y2="558.23"/><line x1="0" y1="776.70" x2="651" y2="570.33"/><line x1="0" y1="788.80" x2="651" y2="582.43"/><line x1="0" y1="800.90" x2="651" y2="594.53"/><line x1="0" y1="813.00" x2="651" y2="606.63"/><line x1="0" y1="825.10" x2="651" y2="618.73"/><line x1="0" y1="837.20" x2="651" y2="630.83"/><line x1="0" y1="849.30" x2="651" y2="642.93"/><line x1="0" y1="873.50" x2="651" y2="667.13"/><line x1="0" y1="885.60" x2="651" y2="679.23"/><line x1="0" y1="897.70" x2="651" y2="691.33"/><line x1="0" y1="909.80" x2="651" y2="703.43"/><line x1="0" y1="921.90" x2="651" y2="715.53"/><line x1="0" y1="934.00" x2="651" y2="727.63"/><line x1="0" y1="946.10" x2="651" y2="739.73"/><line x1="0" y1="958.20" x2="651" y2="751.83"/><line x1="0" y1="970.30" x2="651" y2="763.93"/><line x1="0" y1="994.50" x2="651" y2="788.13"/><line x1="0" y1="1006.60" x2="651" y2="800.23"/><line x1="0" y1="1018.70" x2="651" y2="812.33"/><line x1="0" y1="1030.80" x2="651" y2="824.43"/><line x1="0" y1="1042.90" x2="651" y2="836.53"/><line x1="0" y1="1055.00" x2="651" y2="848.63"/><line x1="0" y1="1067.10" x2="651" y2="860.73"/><line x1="0" y1="1079.20" x2="651" y2="872.83"/><line x1="0" y1="1091.30" x2="651" y2="884.93"/><line x1="0" y1="1115.50" x2="651" y2="909.13"/><line x1="0" y1="1127.60" x2="651" y2="921.23"/><line x1="0" y1="1139.70" x2="651" y2="933.33"/><line x1="0" y1="1151.80" x2="651" y2="945.43"/><line x1="0" y1="1163.90" x2="651" y2="957.53"/><line x1="0" y1="1176.00" x2="651" y2="969.63"/><line x1="0" y1="1188.10" x2="651" y2="981.73"/><line x1="0" y1="1200.20" x2="651" y2="993.83"/><line x1="0" y1="1212.30" x2="651" y2="1005.93"/><line x1="0" y1="1236.50" x2="651" y2="1030.13"/><line x1="0" y1="1248.60" x2="651" y2="1042.23"/><line x1="0" y1="1260.70" x2="651" y2="1054.33"/><line x1="0" y1="1272.80" x2="651" y2="1066.43"/><line x1="0" y1="1284.90" x2="651" y2="1078.53"/><line x1="0" y1="1297.00" x2="651" y2="1090.63"/><line x1="0" y1="1309.10" x2="651" y2="1102.73"/><line x1="0" y1="1321.20" x2="651" y2="1114.83"/><line x1="0" y1="1333.30" x2="651" y2="1126.93"/><line x1="0" y1="1357.50" x2="651" y2="1151.13"/><line x1="0" y1="1369.60" x2="651" y2="1163.23"/><line x1="0" y1="1381.70" x2="651" y2="1175.33"/><line x1="0" y1="1393.80" x2="651" y2="1187.43"/><line x1="0" y1="1405.90" x2="651" y2="1199.53"/><line x1="0" y1="1418.00" x2="651" y2="1211.63"/><line x1="0" y1="1430.10" x2="651" y2="1223.73"/><line x1="0" y1="1442.20" x2="651" y2="1235.83"/><line x1="0" y1="1454.30" x2="651" y2="1247.93"/><line x1="0" y1="1478.50" x2="651" y2="1272.13"/><line x1="0" y1="1490.60" x2="651" y2="1284.23"/><line x1="0" y1="1502.70" x2="651" y2="1296.33"/><line x1="0" y1="1514.80" x2="651" y2="1308.43"/><line x1="0" y1="1526.90" x2="651" y2="1320.53"/><line x1="0" y1="1539.00" x2="651" y2="1332.63"/><line x1="0" y1="1551.10" x2="651" y2="1344.73"/><line x1="0" y1="1563.20" x2="651" y2="1356.83"/><line x1="0" y1="1575.30" x2="651" y2="1368.93"/><line x1="0" y1="1599.50" x2="651" y2="1393.13"/><line x1="0" y1="1611.60" x2="651" y2="1405.23"/><line x1="0" y1="1623.70" x2="651" y2="1417.33"/><line x1="0" y1="1635.80" x2="651" y2="1429.43"/><line x1="0" y1="1647.90" x2="651" y2="1441.53"/><line x1="0" y1="1660.00" x2="651" y2="1453.63"/><line x1="0" y1="1672.10" x2="651" y2="1465.73"/><line x1="0" y1="1684.20" x2="651" y2="1477.83"/><line x1="0" y1="1696.30" x2="651" y2="1489.93"/><line x1="0" y1="1720.50" x2="651" y2="1514.13"/><line x1="0" y1="1732.60" x2="651" y2="1526.23"/><line x1="0" y1="1744.70" x2="651" y2="1538.33"/><line x1="0" y1="1756.80" x2="651" y2="1550.43"/><line x1="0" y1="1768.90" x2="651" y2="1562.53"/><line x1="0" y1="1781.00" x2="651" y2="1574.63"/><line x1="0" y1="1793.10" x2="651" y2="1586.73"/><line x1="0" y1="1805.20" x2="651" y2="1598.83"/><line x1="0" y1="1817.30" x2="651" y2="1610.93"/><line x1="0" y1="1841.50" x2="651" y2="1635.13"/><line x1="0" y1="1853.60" x2="651" y2="1647.23"/><line x1="0" y1="1865.70" x2="651" y2="1659.33"/><line x1="0" y1="1877.80" x2="651" y2="1671.43"/><line x1="0" y1="1889.90" x2="651" y2="1683.53"/><line x1="0" y1="1902.00" x2="651" y2="1695.63"/><line x1="0" y1="1914.10" x2="651" y2="1707.73"/><line x1="0" y1="1926.20" x2="651" y2="1719.83"/><line x1="0" y1="1938.30" x2="651" y2="1731.93"/></g>
<g stroke="#475a78" stroke-width="1" opacity="0.32" shape-rendering="crispEdges"><line x1="0" y1="-1409.90" x2="651" y2="-1227.62"/><line x1="0" y1="-1295.60" x2="651" y2="-1113.32"/><line x1="0" y1="-1181.30" x2="651" y2="-999.02"/><line x1="0" y1="-1067.00" x2="651" y2="-884.72"/><line x1="0" y1="-952.70" x2="651" y2="-770.42"/><line x1="0" y1="-838.40" x2="651" y2="-656.12"/><line x1="0" y1="-724.10" x2="651" y2="-541.82"/><line x1="0" y1="-609.80" x2="651" y2="-427.52"/><line x1="0" y1="-495.50" x2="651" y2="-313.22"/><line x1="0" y1="-381.20" x2="651" y2="-198.92"/><line x1="0" y1="-266.90" x2="651" y2="-84.62"/><line x1="0" y1="-152.60" x2="651" y2="29.68"/><line x1="0" y1="-38.30" x2="651" y2="143.98"/><line x1="0" y1="76.00" x2="651" y2="258.28"/><line x1="0" y1="190.30" x2="651" y2="372.58"/><line x1="0" y1="304.60" x2="651" y2="486.88"/><line x1="0" y1="418.90" x2="651" y2="601.18"/><line x1="0" y1="533.20" x2="651" y2="715.48"/><line x1="0" y1="647.50" x2="651" y2="829.78"/><line x1="0" y1="761.80" x2="651" y2="944.08"/><line x1="0" y1="876.10" x2="651" y2="1058.38"/><line x1="0" y1="990.40" x2="651" y2="1172.68"/><line x1="0" y1="1104.70" x2="651" y2="1286.98"/><line x1="0" y1="1219.00" x2="651" y2="1401.28"/><line x1="0" y1="1333.30" x2="651" y2="1515.58"/><line x1="0" y1="1447.60" x2="651" y2="1629.88"/><line x1="0" y1="1561.90" x2="651" y2="1744.18"/><line x1="0" y1="1676.20" x2="651" y2="1858.48"/></g>
<g stroke="#475a78" stroke-width="1" opacity="0.32" shape-rendering="crispEdges"><line x1="0" y1="-1437.60" x2="651" y2="-1643.97"/><line x1="0" y1="-1316.60" x2="651" y2="-1522.97"/><line x1="0" y1="-1195.60" x2="651" y2="-1401.97"/><line x1="0" y1="-1074.60" x2="651" y2="-1280.97"/><line x1="0" y1="-953.60" x2="651" y2="-1159.97"/><line x1="0" y1="-832.60" x2="651" y2="-1038.97"/><line x1="0" y1="-711.60" x2="651" y2="-917.97"/><line x1="0" y1="-590.60" x2="651" y2="-796.97"/><line x1="0" y1="-469.60" x2="651" y2="-675.97"/><line x1="0" y1="-348.60" x2="651" y2="-554.97"/><line x1="0" y1="-227.60" x2="651" y2="-433.97"/><line x1="0" y1="-106.60" x2="651" y2="-312.97"/><line x1="0" y1="14.40" x2="651" y2="-191.97"/><line x1="0" y1="135.40" x2="651" y2="-70.97"/><line x1="0" y1="256.40" x2="651" y2="50.03"/><line x1="0" y1="377.40" x2="651" y2="171.03"/><line x1="0" y1="498.40" x2="651" y2="292.03"/><line x1="0" y1="619.40" x2="651" y2="413.03"/><line x1="0" y1="740.40" x2="651" y2="534.03"/><line x1="0" y1="861.40" x2="651" y2="655.03"/><line x1="0" y1="982.40" x2="651" y2="776.03"/><line x1="0" y1="1103.40" x2="651" y2="897.03"/><line x1="0" y1="1224.40" x2="651" y2="1018.03"/><line x1="0" y1="1345.40" x2="651" y2="1139.03"/><line x1="0" y1="1466.40" x2="651" y2="1260.03"/><line x1="0" y1="1587.40" x2="651" y2="1381.03"/><line x1="0" y1="1708.40" x2="651" y2="1502.03"/><line x1="0" y1="1829.40" x2="651" y2="1623.03"/></g>
</g><g clip-path="url(#cgnd)">
<g stroke="#c8c8c8" stroke-width="1" opacity="0.04" shape-rendering="crispEdges"><line x1="0" y1="-1398.47" x2="651" y2="-1216.19"/><line x1="0" y1="-1387.04" x2="651" y2="-1204.76"/><line x1="0" y1="-1375.61" x2="651" y2="-1193.33"/><line x1="0" y1="-1364.18" x2="651" y2="-1181.90"/><line x1="0" y1="-1352.75" x2="651" y2="-1170.47"/><line x1="0" y1="-1341.32" x2="651" y2="-1159.04"/><line x1="0" y1="-1329.89" x2="651" y2="-1147.61"/><line x1="0" y1="-1318.46" x2="651" y2="-1136.18"/><line x1="0" y1="-1307.03" x2="651" y2="-1124.75"/><line x1="0" y1="-1284.17" x2="651" y2="-1101.89"/><line x1="0" y1="-1272.74" x2="651" y2="-1090.46"/><line x1="0" y1="-1261.31" x2="651" y2="-1079.03"/><line x1="0" y1="-1249.88" x2="651" y2="-1067.60"/><line x1="0" y1="-1238.45" x2="651" y2="-1056.17"/><line x1="0" y1="-1227.02" x2="651" y2="-1044.74"/><line x1="0" y1="-1215.59" x2="651" y2="-1033.31"/><line x1="0" y1="-1204.16" x2="651" y2="-1021.88"/><line x1="0" y1="-1192.73" x2="651" y2="-1010.45"/><line x1="0" y1="-1169.87" x2="651" y2="-987.59"/><line x1="0" y1="-1158.44" x2="651" y2="-976.16"/><line x1="0" y1="-1147.01" x2="651" y2="-964.73"/><line x1="0" y1="-1135.58" x2="651" y2="-953.30"/><line x1="0" y1="-1124.15" x2="651" y2="-941.87"/><line x1="0" y1="-1112.72" x2="651" y2="-930.44"/><line x1="0" y1="-1101.29" x2="651" y2="-919.01"/><line x1="0" y1="-1089.86" x2="651" y2="-907.58"/><line x1="0" y1="-1078.43" x2="651" y2="-896.15"/><line x1="0" y1="-1055.57" x2="651" y2="-873.29"/><line x1="0" y1="-1044.14" x2="651" y2="-861.86"/><line x1="0" y1="-1032.71" x2="651" y2="-850.43"/><line x1="0" y1="-1021.28" x2="651" y2="-839.00"/><line x1="0" y1="-1009.85" x2="651" y2="-827.57"/><line x1="0" y1="-998.42" x2="651" y2="-816.14"/><line x1="0" y1="-986.99" x2="651" y2="-804.71"/><line x1="0" y1="-975.56" x2="651" y2="-793.28"/><line x1="0" y1="-964.13" x2="651" y2="-781.85"/><line x1="0" y1="-941.27" x2="651" y2="-758.99"/><line x1="0" y1="-929.84" x2="651" y2="-747.56"/><line x1="0" y1="-918.41" x2="651" y2="-736.13"/><line x1="0" y1="-906.98" x2="651" y2="-724.70"/><line x1="0" y1="-895.55" x2="651" y2="-713.27"/><line x1="0" y1="-884.12" x2="651" y2="-701.84"/><line x1="0" y1="-872.69" x2="651" y2="-690.41"/><line x1="0" y1="-861.26" x2="651" y2="-678.98"/><line x1="0" y1="-849.83" x2="651" y2="-667.55"/><line x1="0" y1="-826.97" x2="651" y2="-644.69"/><line x1="0" y1="-815.54" x2="651" y2="-633.26"/><line x1="0" y1="-804.11" x2="651" y2="-621.83"/><line x1="0" y1="-792.68" x2="651" y2="-610.40"/><line x1="0" y1="-781.25" x2="651" y2="-598.97"/><line x1="0" y1="-769.82" x2="651" y2="-587.54"/><line x1="0" y1="-758.39" x2="651" y2="-576.11"/><line x1="0" y1="-746.96" x2="651" y2="-564.68"/><line x1="0" y1="-735.53" x2="651" y2="-553.25"/><line x1="0" y1="-712.67" x2="651" y2="-530.39"/><line x1="0" y1="-701.24" x2="651" y2="-518.96"/><line x1="0" y1="-689.81" x2="651" y2="-507.53"/><line x1="0" y1="-678.38" x2="651" y2="-496.10"/><line x1="0" y1="-666.95" x2="651" y2="-484.67"/><line x1="0" y1="-655.52" x2="651" y2="-473.24"/><line x1="0" y1="-644.09" x2="651" y2="-461.81"/><line x1="0" y1="-632.66" x2="651" y2="-450.38"/><line x1="0" y1="-621.23" x2="651" y2="-438.95"/><line x1="0" y1="-598.37" x2="651" y2="-416.09"/><line x1="0" y1="-586.94" x2="651" y2="-404.66"/><line x1="0" y1="-575.51" x2="651" y2="-393.23"/><line x1="0" y1="-564.08" x2="651" y2="-381.80"/><line x1="0" y1="-552.65" x2="651" y2="-370.37"/><line x1="0" y1="-541.22" x2="651" y2="-358.94"/><line x1="0" y1="-529.79" x2="651" y2="-347.51"/><line x1="0" y1="-518.36" x2="651" y2="-336.08"/><line x1="0" y1="-506.93" x2="651" y2="-324.65"/><line x1="0" y1="-484.07" x2="651" y2="-301.79"/><line x1="0" y1="-472.64" x2="651" y2="-290.36"/><line x1="0" y1="-461.21" x2="651" y2="-278.93"/><line x1="0" y1="-449.78" x2="651" y2="-267.50"/><line x1="0" y1="-438.35" x2="651" y2="-256.07"/><line x1="0" y1="-426.92" x2="651" y2="-244.64"/><line x1="0" y1="-415.49" x2="651" y2="-233.21"/><line x1="0" y1="-404.06" x2="651" y2="-221.78"/><line x1="0" y1="-392.63" x2="651" y2="-210.35"/><line x1="0" y1="-369.77" x2="651" y2="-187.49"/><line x1="0" y1="-358.34" x2="651" y2="-176.06"/><line x1="0" y1="-346.91" x2="651" y2="-164.63"/><line x1="0" y1="-335.48" x2="651" y2="-153.20"/><line x1="0" y1="-324.05" x2="651" y2="-141.77"/><line x1="0" y1="-312.62" x2="651" y2="-130.34"/><line x1="0" y1="-301.19" x2="651" y2="-118.91"/><line x1="0" y1="-289.76" x2="651" y2="-107.48"/><line x1="0" y1="-278.33" x2="651" y2="-96.05"/><line x1="0" y1="-255.47" x2="651" y2="-73.19"/><line x1="0" y1="-244.04" x2="651" y2="-61.76"/><line x1="0" y1="-232.61" x2="651" y2="-50.33"/><line x1="0" y1="-221.18" x2="651" y2="-38.90"/><line x1="0" y1="-209.75" x2="651" y2="-27.47"/><line x1="0" y1="-198.32" x2="651" y2="-16.04"/><line x1="0" y1="-186.89" x2="651" y2="-4.61"/><line x1="0" y1="-175.46" x2="651" y2="6.82"/><line x1="0" y1="-164.03" x2="651" y2="18.25"/><line x1="0" y1="-141.17" x2="651" y2="41.11"/><line x1="0" y1="-129.74" x2="651" y2="52.54"/><line x1="0" y1="-118.31" x2="651" y2="63.97"/><line x1="0" y1="-106.88" x2="651" y2="75.40"/><line x1="0" y1="-95.45" x2="651" y2="86.83"/><line x1="0" y1="-84.02" x2="651" y2="98.26"/><line x1="0" y1="-72.59" x2="651" y2="109.69"/><line x1="0" y1="-61.16" x2="651" y2="121.12"/><line x1="0" y1="-49.73" x2="651" y2="132.55"/><line x1="0" y1="-26.87" x2="651" y2="155.41"/><line x1="0" y1="-15.44" x2="651" y2="166.84"/><line x1="0" y1="-4.01" x2="651" y2="178.27"/><line x1="0" y1="7.42" x2="651" y2="189.70"/><line x1="0" y1="18.85" x2="651" y2="201.13"/><line x1="0" y1="30.28" x2="651" y2="212.56"/><line x1="0" y1="41.71" x2="651" y2="223.99"/><line x1="0" y1="53.14" x2="651" y2="235.42"/><line x1="0" y1="64.57" x2="651" y2="246.85"/><line x1="0" y1="87.43" x2="651" y2="269.71"/><line x1="0" y1="98.86" x2="651" y2="281.14"/><line x1="0" y1="110.29" x2="651" y2="292.57"/><line x1="0" y1="121.72" x2="651" y2="304.00"/><line x1="0" y1="133.15" x2="651" y2="315.43"/><line x1="0" y1="144.58" x2="651" y2="326.86"/><line x1="0" y1="156.01" x2="651" y2="338.29"/><line x1="0" y1="167.44" x2="651" y2="349.72"/><line x1="0" y1="178.87" x2="651" y2="361.15"/><line x1="0" y1="201.73" x2="651" y2="384.01"/><line x1="0" y1="213.16" x2="651" y2="395.44"/><line x1="0" y1="224.59" x2="651" y2="406.87"/><line x1="0" y1="236.02" x2="651" y2="418.30"/><line x1="0" y1="247.45" x2="651" y2="429.73"/><line x1="0" y1="258.88" x2="651" y2="441.16"/><line x1="0" y1="270.31" x2="651" y2="452.59"/><line x1="0" y1="281.74" x2="651" y2="464.02"/><line x1="0" y1="293.17" x2="651" y2="475.45"/><line x1="0" y1="316.03" x2="651" y2="498.31"/><line x1="0" y1="327.46" x2="651" y2="509.74"/><line x1="0" y1="338.89" x2="651" y2="521.17"/><line x1="0" y1="350.32" x2="651" y2="532.60"/><line x1="0" y1="361.75" x2="651" y2="544.03"/><line x1="0" y1="373.18" x2="651" y2="555.46"/><line x1="0" y1="384.61" x2="651" y2="566.89"/><line x1="0" y1="396.04" x2="651" y2="578.32"/><line x1="0" y1="407.47" x2="651" y2="589.75"/><line x1="0" y1="430.33" x2="651" y2="612.61"/><line x1="0" y1="441.76" x2="651" y2="624.04"/><line x1="0" y1="453.19" x2="651" y2="635.47"/><line x1="0" y1="464.62" x2="651" y2="646.90"/><line x1="0" y1="476.05" x2="651" y2="658.33"/><line x1="0" y1="487.48" x2="651" y2="669.76"/><line x1="0" y1="498.91" x2="651" y2="681.19"/><line x1="0" y1="510.34" x2="651" y2="692.62"/><line x1="0" y1="521.77" x2="651" y2="704.05"/><line x1="0" y1="544.63" x2="651" y2="726.91"/><line x1="0" y1="556.06" x2="651" y2="738.34"/><line x1="0" y1="567.49" x2="651" y2="749.77"/><line x1="0" y1="578.92" x2="651" y2="761.20"/><line x1="0" y1="590.35" x2="651" y2="772.63"/><line x1="0" y1="601.78" x2="651" y2="784.06"/><line x1="0" y1="613.21" x2="651" y2="795.49"/><line x1="0" y1="624.64" x2="651" y2="806.92"/><line x1="0" y1="636.07" x2="651" y2="818.35"/><line x1="0" y1="658.93" x2="651" y2="841.21"/><line x1="0" y1="670.36" x2="651" y2="852.64"/><line x1="0" y1="681.79" x2="651" y2="864.07"/><line x1="0" y1="693.22" x2="651" y2="875.50"/><line x1="0" y1="704.65" x2="651" y2="886.93"/><line x1="0" y1="716.08" x2="651" y2="898.36"/><line x1="0" y1="727.51" x2="651" y2="909.79"/><line x1="0" y1="738.94" x2="651" y2="921.22"/><line x1="0" y1="750.37" x2="651" y2="932.65"/><line x1="0" y1="773.23" x2="651" y2="955.51"/><line x1="0" y1="784.66" x2="651" y2="966.94"/><line x1="0" y1="796.09" x2="651" y2="978.37"/><line x1="0" y1="807.52" x2="651" y2="989.80"/><line x1="0" y1="818.95" x2="651" y2="1001.23"/><line x1="0" y1="830.38" x2="651" y2="1012.66"/><line x1="0" y1="841.81" x2="651" y2="1024.09"/><line x1="0" y1="853.24" x2="651" y2="1035.52"/><line x1="0" y1="864.67" x2="651" y2="1046.95"/><line x1="0" y1="887.53" x2="651" y2="1069.81"/><line x1="0" y1="898.96" x2="651" y2="1081.24"/><line x1="0" y1="910.39" x2="651" y2="1092.67"/><line x1="0" y1="921.82" x2="651" y2="1104.10"/><line x1="0" y1="933.25" x2="651" y2="1115.53"/><line x1="0" y1="944.68" x2="651" y2="1126.96"/><line x1="0" y1="956.11" x2="651" y2="1138.39"/><line x1="0" y1="967.54" x2="651" y2="1149.82"/><line x1="0" y1="978.97" x2="651" y2="1161.25"/><line x1="0" y1="1001.83" x2="651" y2="1184.11"/><line x1="0" y1="1013.26" x2="651" y2="1195.54"/><line x1="0" y1="1024.69" x2="651" y2="1206.97"/><line x1="0" y1="1036.12" x2="651" y2="1218.40"/><line x1="0" y1="1047.55" x2="651" y2="1229.83"/><line x1="0" y1="1058.98" x2="651" y2="1241.26"/><line x1="0" y1="1070.41" x2="651" y2="1252.69"/><line x1="0" y1="1081.84" x2="651" y2="1264.12"/><line x1="0" y1="1093.27" x2="651" y2="1275.55"/><line x1="0" y1="1116.13" x2="651" y2="1298.41"/><line x1="0" y1="1127.56" x2="651" y2="1309.84"/><line x1="0" y1="1138.99" x2="651" y2="1321.27"/><line x1="0" y1="1150.42" x2="651" y2="1332.70"/><line x1="0" y1="1161.85" x2="651" y2="1344.13"/><line x1="0" y1="1173.28" x2="651" y2="1355.56"/><line x1="0" y1="1184.71" x2="651" y2="1366.99"/><line x1="0" y1="1196.14" x2="651" y2="1378.42"/><line x1="0" y1="1207.57" x2="651" y2="1389.85"/><line x1="0" y1="1230.43" x2="651" y2="1412.71"/><line x1="0" y1="1241.86" x2="651" y2="1424.14"/><line x1="0" y1="1253.29" x2="651" y2="1435.57"/><line x1="0" y1="1264.72" x2="651" y2="1447.00"/><line x1="0" y1="1276.15" x2="651" y2="1458.43"/><line x1="0" y1="1287.58" x2="651" y2="1469.86"/><line x1="0" y1="1299.01" x2="651" y2="1481.29"/><line x1="0" y1="1310.44" x2="651" y2="1492.72"/><line x1="0" y1="1321.87" x2="651" y2="1504.15"/><line x1="0" y1="1344.73" x2="651" y2="1527.01"/><line x1="0" y1="1356.16" x2="651" y2="1538.44"/><line x1="0" y1="1367.59" x2="651" y2="1549.87"/><line x1="0" y1="1379.02" x2="651" y2="1561.30"/><line x1="0" y1="1390.45" x2="651" y2="1572.73"/><line x1="0" y1="1401.88" x2="651" y2="1584.16"/><line x1="0" y1="1413.31" x2="651" y2="1595.59"/><line x1="0" y1="1424.74" x2="651" y2="1607.02"/><line x1="0" y1="1436.17" x2="651" y2="1618.45"/><line x1="0" y1="1459.03" x2="651" y2="1641.31"/><line x1="0" y1="1470.46" x2="651" y2="1652.74"/><line x1="0" y1="1481.89" x2="651" y2="1664.17"/><line x1="0" y1="1493.32" x2="651" y2="1675.60"/><line x1="0" y1="1504.75" x2="651" y2="1687.03"/><line x1="0" y1="1516.18" x2="651" y2="1698.46"/><line x1="0" y1="1527.61" x2="651" y2="1709.89"/><line x1="0" y1="1539.04" x2="651" y2="1721.32"/><line x1="0" y1="1550.47" x2="651" y2="1732.75"/><line x1="0" y1="1573.33" x2="651" y2="1755.61"/><line x1="0" y1="1584.76" x2="651" y2="1767.04"/><line x1="0" y1="1596.19" x2="651" y2="1778.47"/><line x1="0" y1="1607.62" x2="651" y2="1789.90"/><line x1="0" y1="1619.05" x2="651" y2="1801.33"/><line x1="0" y1="1630.48" x2="651" y2="1812.76"/><line x1="0" y1="1641.91" x2="651" y2="1824.19"/><line x1="0" y1="1653.34" x2="651" y2="1835.62"/><line x1="0" y1="1664.77" x2="651" y2="1847.05"/><line x1="0" y1="1687.63" x2="651" y2="1869.91"/><line x1="0" y1="1699.06" x2="651" y2="1881.34"/><line x1="0" y1="1710.49" x2="651" y2="1892.77"/><line x1="0" y1="1721.92" x2="651" y2="1904.20"/><line x1="0" y1="1733.35" x2="651" y2="1915.63"/><line x1="0" y1="1744.78" x2="651" y2="1927.06"/><line x1="0" y1="1756.21" x2="651" y2="1938.49"/><line x1="0" y1="1767.64" x2="651" y2="1949.92"/><line x1="0" y1="1779.07" x2="651" y2="1961.35"/></g>
<g stroke="#c8c8c8" stroke-width="1" opacity="0.04" shape-rendering="crispEdges"><line x1="0" y1="-1425.50" x2="651" y2="-1631.87"/><line x1="0" y1="-1413.40" x2="651" y2="-1619.77"/><line x1="0" y1="-1401.30" x2="651" y2="-1607.67"/><line x1="0" y1="-1389.20" x2="651" y2="-1595.57"/><line x1="0" y1="-1377.10" x2="651" y2="-1583.47"/><line x1="0" y1="-1365.00" x2="651" y2="-1571.37"/><line x1="0" y1="-1352.90" x2="651" y2="-1559.27"/><line x1="0" y1="-1340.80" x2="651" y2="-1547.17"/><line x1="0" y1="-1328.70" x2="651" y2="-1535.07"/><line x1="0" y1="-1304.50" x2="651" y2="-1510.87"/><line x1="0" y1="-1292.40" x2="651" y2="-1498.77"/><line x1="0" y1="-1280.30" x2="651" y2="-1486.67"/><line x1="0" y1="-1268.20" x2="651" y2="-1474.57"/><line x1="0" y1="-1256.10" x2="651" y2="-1462.47"/><line x1="0" y1="-1244.00" x2="651" y2="-1450.37"/><line x1="0" y1="-1231.90" x2="651" y2="-1438.27"/><line x1="0" y1="-1219.80" x2="651" y2="-1426.17"/><line x1="0" y1="-1207.70" x2="651" y2="-1414.07"/><line x1="0" y1="-1183.50" x2="651" y2="-1389.87"/><line x1="0" y1="-1171.40" x2="651" y2="-1377.77"/><line x1="0" y1="-1159.30" x2="651" y2="-1365.67"/><line x1="0" y1="-1147.20" x2="651" y2="-1353.57"/><line x1="0" y1="-1135.10" x2="651" y2="-1341.47"/><line x1="0" y1="-1123.00" x2="651" y2="-1329.37"/><line x1="0" y1="-1110.90" x2="651" y2="-1317.27"/><line x1="0" y1="-1098.80" x2="651" y2="-1305.17"/><line x1="0" y1="-1086.70" x2="651" y2="-1293.07"/><line x1="0" y1="-1062.50" x2="651" y2="-1268.87"/><line x1="0" y1="-1050.40" x2="651" y2="-1256.77"/><line x1="0" y1="-1038.30" x2="651" y2="-1244.67"/><line x1="0" y1="-1026.20" x2="651" y2="-1232.57"/><line x1="0" y1="-1014.10" x2="651" y2="-1220.47"/><line x1="0" y1="-1002.00" x2="651" y2="-1208.37"/><line x1="0" y1="-989.90" x2="651" y2="-1196.27"/><line x1="0" y1="-977.80" x2="651" y2="-1184.17"/><line x1="0" y1="-965.70" x2="651" y2="-1172.07"/><line x1="0" y1="-941.50" x2="651" y2="-1147.87"/><line x1="0" y1="-929.40" x2="651" y2="-1135.77"/><line x1="0" y1="-917.30" x2="651" y2="-1123.67"/><line x1="0" y1="-905.20" x2="651" y2="-1111.57"/><line x1="0" y1="-893.10" x2="651" y2="-1099.47"/><line x1="0" y1="-881.00" x2="651" y2="-1087.37"/><line x1="0" y1="-868.90" x2="651" y2="-1075.27"/><line x1="0" y1="-856.80" x2="651" y2="-1063.17"/><line x1="0" y1="-844.70" x2="651" y2="-1051.07"/><line x1="0" y1="-820.50" x2="651" y2="-1026.87"/><line x1="0" y1="-808.40" x2="651" y2="-1014.77"/><line x1="0" y1="-796.30" x2="651" y2="-1002.67"/><line x1="0" y1="-784.20" x2="651" y2="-990.57"/><line x1="0" y1="-772.10" x2="651" y2="-978.47"/><line x1="0" y1="-760.00" x2="651" y2="-966.37"/><line x1="0" y1="-747.90" x2="651" y2="-954.27"/><line x1="0" y1="-735.80" x2="651" y2="-942.17"/><line x1="0" y1="-723.70" x2="651" y2="-930.07"/><line x1="0" y1="-699.50" x2="651" y2="-905.87"/><line x1="0" y1="-687.40" x2="651" y2="-893.77"/><line x1="0" y1="-675.30" x2="651" y2="-881.67"/><line x1="0" y1="-663.20" x2="651" y2="-869.57"/><line x1="0" y1="-651.10" x2="651" y2="-857.47"/><line x1="0" y1="-639.00" x2="651" y2="-845.37"/><line x1="0" y1="-626.90" x2="651" y2="-833.27"/><line x1="0" y1="-614.80" x2="651" y2="-821.17"/><line x1="0" y1="-602.70" x2="651" y2="-809.07"/><line x1="0" y1="-578.50" x2="651" y2="-784.87"/><line x1="0" y1="-566.40" x2="651" y2="-772.77"/><line x1="0" y1="-554.30" x2="651" y2="-760.67"/><line x1="0" y1="-542.20" x2="651" y2="-748.57"/><line x1="0" y1="-530.10" x2="651" y2="-736.47"/><line x1="0" y1="-518.00" x2="651" y2="-724.37"/><line x1="0" y1="-505.90" x2="651" y2="-712.27"/><line x1="0" y1="-493.80" x2="651" y2="-700.17"/><line x1="0" y1="-481.70" x2="651" y2="-688.07"/><line x1="0" y1="-457.50" x2="651" y2="-663.87"/><line x1="0" y1="-445.40" x2="651" y2="-651.77"/><line x1="0" y1="-433.30" x2="651" y2="-639.67"/><line x1="0" y1="-421.20" x2="651" y2="-627.57"/><line x1="0" y1="-409.10" x2="651" y2="-615.47"/><line x1="0" y1="-397.00" x2="651" y2="-603.37"/><line x1="0" y1="-384.90" x2="651" y2="-591.27"/><line x1="0" y1="-372.80" x2="651" y2="-579.17"/><line x1="0" y1="-360.70" x2="651" y2="-567.07"/><line x1="0" y1="-336.50" x2="651" y2="-542.87"/><line x1="0" y1="-324.40" x2="651" y2="-530.77"/><line x1="0" y1="-312.30" x2="651" y2="-518.67"/><line x1="0" y1="-300.20" x2="651" y2="-506.57"/><line x1="0" y1="-288.10" x2="651" y2="-494.47"/><line x1="0" y1="-276.00" x2="651" y2="-482.37"/><line x1="0" y1="-263.90" x2="651" y2="-470.27"/><line x1="0" y1="-251.80" x2="651" y2="-458.17"/><line x1="0" y1="-239.70" x2="651" y2="-446.07"/><line x1="0" y1="-215.50" x2="651" y2="-421.87"/><line x1="0" y1="-203.40" x2="651" y2="-409.77"/><line x1="0" y1="-191.30" x2="651" y2="-397.67"/><line x1="0" y1="-179.20" x2="651" y2="-385.57"/><line x1="0" y1="-167.10" x2="651" y2="-373.47"/><line x1="0" y1="-155.00" x2="651" y2="-361.37"/><line x1="0" y1="-142.90" x2="651" y2="-349.27"/><line x1="0" y1="-130.80" x2="651" y2="-337.17"/><line x1="0" y1="-118.70" x2="651" y2="-325.07"/><line x1="0" y1="-94.50" x2="651" y2="-300.87"/><line x1="0" y1="-82.40" x2="651" y2="-288.77"/><line x1="0" y1="-70.30" x2="651" y2="-276.67"/><line x1="0" y1="-58.20" x2="651" y2="-264.57"/><line x1="0" y1="-46.10" x2="651" y2="-252.47"/><line x1="0" y1="-34.00" x2="651" y2="-240.37"/><line x1="0" y1="-21.90" x2="651" y2="-228.27"/><line x1="0" y1="-9.80" x2="651" y2="-216.17"/><line x1="0" y1="2.30" x2="651" y2="-204.07"/><line x1="0" y1="26.50" x2="651" y2="-179.87"/><line x1="0" y1="38.60" x2="651" y2="-167.77"/><line x1="0" y1="50.70" x2="651" y2="-155.67"/><line x1="0" y1="62.80" x2="651" y2="-143.57"/><line x1="0" y1="74.90" x2="651" y2="-131.47"/><line x1="0" y1="87.00" x2="651" y2="-119.37"/><line x1="0" y1="99.10" x2="651" y2="-107.27"/><line x1="0" y1="111.20" x2="651" y2="-95.17"/><line x1="0" y1="123.30" x2="651" y2="-83.07"/><line x1="0" y1="147.50" x2="651" y2="-58.87"/><line x1="0" y1="159.60" x2="651" y2="-46.77"/><line x1="0" y1="171.70" x2="651" y2="-34.67"/><line x1="0" y1="183.80" x2="651" y2="-22.57"/><line x1="0" y1="195.90" x2="651" y2="-10.47"/><line x1="0" y1="208.00" x2="651" y2="1.63"/><line x1="0" y1="220.10" x2="651" y2="13.73"/><line x1="0" y1="232.20" x2="651" y2="25.83"/><line x1="0" y1="244.30" x2="651" y2="37.93"/><line x1="0" y1="268.50" x2="651" y2="62.13"/><line x1="0" y1="280.60" x2="651" y2="74.23"/><line x1="0" y1="292.70" x2="651" y2="86.33"/><line x1="0" y1="304.80" x2="651" y2="98.43"/><line x1="0" y1="316.90" x2="651" y2="110.53"/><line x1="0" y1="329.00" x2="651" y2="122.63"/><line x1="0" y1="341.10" x2="651" y2="134.73"/><line x1="0" y1="353.20" x2="651" y2="146.83"/><line x1="0" y1="365.30" x2="651" y2="158.93"/><line x1="0" y1="389.50" x2="651" y2="183.13"/><line x1="0" y1="401.60" x2="651" y2="195.23"/><line x1="0" y1="413.70" x2="651" y2="207.33"/><line x1="0" y1="425.80" x2="651" y2="219.43"/><line x1="0" y1="437.90" x2="651" y2="231.53"/><line x1="0" y1="450.00" x2="651" y2="243.63"/><line x1="0" y1="462.10" x2="651" y2="255.73"/><line x1="0" y1="474.20" x2="651" y2="267.83"/><line x1="0" y1="486.30" x2="651" y2="279.93"/><line x1="0" y1="510.50" x2="651" y2="304.13"/><line x1="0" y1="522.60" x2="651" y2="316.23"/><line x1="0" y1="534.70" x2="651" y2="328.33"/><line x1="0" y1="546.80" x2="651" y2="340.43"/><line x1="0" y1="558.90" x2="651" y2="352.53"/><line x1="0" y1="571.00" x2="651" y2="364.63"/><line x1="0" y1="583.10" x2="651" y2="376.73"/><line x1="0" y1="595.20" x2="651" y2="388.83"/><line x1="0" y1="607.30" x2="651" y2="400.93"/><line x1="0" y1="631.50" x2="651" y2="425.13"/><line x1="0" y1="643.60" x2="651" y2="437.23"/><line x1="0" y1="655.70" x2="651" y2="449.33"/><line x1="0" y1="667.80" x2="651" y2="461.43"/><line x1="0" y1="679.90" x2="651" y2="473.53"/><line x1="0" y1="692.00" x2="651" y2="485.63"/><line x1="0" y1="704.10" x2="651" y2="497.73"/><line x1="0" y1="716.20" x2="651" y2="509.83"/><line x1="0" y1="728.30" x2="651" y2="521.93"/><line x1="0" y1="752.50" x2="651" y2="546.13"/><line x1="0" y1="764.60" x2="651" y2="558.23"/><line x1="0" y1="776.70" x2="651" y2="570.33"/><line x1="0" y1="788.80" x2="651" y2="582.43"/><line x1="0" y1="800.90" x2="651" y2="594.53"/><line x1="0" y1="813.00" x2="651" y2="606.63"/><line x1="0" y1="825.10" x2="651" y2="618.73"/><line x1="0" y1="837.20" x2="651" y2="630.83"/><line x1="0" y1="849.30" x2="651" y2="642.93"/><line x1="0" y1="873.50" x2="651" y2="667.13"/><line x1="0" y1="885.60" x2="651" y2="679.23"/><line x1="0" y1="897.70" x2="651" y2="691.33"/><line x1="0" y1="909.80" x2="651" y2="703.43"/><line x1="0" y1="921.90" x2="651" y2="715.53"/><line x1="0" y1="934.00" x2="651" y2="727.63"/><line x1="0" y1="946.10" x2="651" y2="739.73"/><line x1="0" y1="958.20" x2="651" y2="751.83"/><line x1="0" y1="970.30" x2="651" y2="763.93"/><line x1="0" y1="994.50" x2="651" y2="788.13"/><line x1="0" y1="1006.60" x2="651" y2="800.23"/><line x1="0" y1="1018.70" x2="651" y2="812.33"/><line x1="0" y1="1030.80" x2="651" y2="824.43"/><line x1="0" y1="1042.90" x2="651" y2="836.53"/><line x1="0" y1="1055.00" x2="651" y2="848.63"/><line x1="0" y1="1067.10" x2="651" y2="860.73"/><line x1="0" y1="1079.20" x2="651" y2="872.83"/><line x1="0" y1="1091.30" x2="651" y2="884.93"/><line x1="0" y1="1115.50" x2="651" y2="909.13"/><line x1="0" y1="1127.60" x2="651" y2="921.23"/><line x1="0" y1="1139.70" x2="651" y2="933.33"/><line x1="0" y1="1151.80" x2="651" y2="945.43"/><line x1="0" y1="1163.90" x2="651" y2="957.53"/><line x1="0" y1="1176.00" x2="651" y2="969.63"/><line x1="0" y1="1188.10" x2="651" y2="981.73"/><line x1="0" y1="1200.20" x2="651" y2="993.83"/><line x1="0" y1="1212.30" x2="651" y2="1005.93"/><line x1="0" y1="1236.50" x2="651" y2="1030.13"/><line x1="0" y1="1248.60" x2="651" y2="1042.23"/><line x1="0" y1="1260.70" x2="651" y2="1054.33"/><line x1="0" y1="1272.80" x2="651" y2="1066.43"/><line x1="0" y1="1284.90" x2="651" y2="1078.53"/><line x1="0" y1="1297.00" x2="651" y2="1090.63"/><line x1="0" y1="1309.10" x2="651" y2="1102.73"/><line x1="0" y1="1321.20" x2="651" y2="1114.83"/><line x1="0" y1="1333.30" x2="651" y2="1126.93"/><line x1="0" y1="1357.50" x2="651" y2="1151.13"/><line x1="0" y1="1369.60" x2="651" y2="1163.23"/><line x1="0" y1="1381.70" x2="651" y2="1175.33"/><line x1="0" y1="1393.80" x2="651" y2="1187.43"/><line x1="0" y1="1405.90" x2="651" y2="1199.53"/><line x1="0" y1="1418.00" x2="651" y2="1211.63"/><line x1="0" y1="1430.10" x2="651" y2="1223.73"/><line x1="0" y1="1442.20" x2="651" y2="1235.83"/><line x1="0" y1="1454.30" x2="651" y2="1247.93"/><line x1="0" y1="1478.50" x2="651" y2="1272.13"/><line x1="0" y1="1490.60" x2="651" y2="1284.23"/><line x1="0" y1="1502.70" x2="651" y2="1296.33"/><line x1="0" y1="1514.80" x2="651" y2="1308.43"/><line x1="0" y1="1526.90" x2="651" y2="1320.53"/><line x1="0" y1="1539.00" x2="651" y2="1332.63"/><line x1="0" y1="1551.10" x2="651" y2="1344.73"/><line x1="0" y1="1563.20" x2="651" y2="1356.83"/><line x1="0" y1="1575.30" x2="651" y2="1368.93"/><line x1="0" y1="1599.50" x2="651" y2="1393.13"/><line x1="0" y1="1611.60" x2="651" y2="1405.23"/><line x1="0" y1="1623.70" x2="651" y2="1417.33"/><line x1="0" y1="1635.80" x2="651" y2="1429.43"/><line x1="0" y1="1647.90" x2="651" y2="1441.53"/><line x1="0" y1="1660.00" x2="651" y2="1453.63"/><line x1="0" y1="1672.10" x2="651" y2="1465.73"/><line x1="0" y1="1684.20" x2="651" y2="1477.83"/><line x1="0" y1="1696.30" x2="651" y2="1489.93"/><line x1="0" y1="1720.50" x2="651" y2="1514.13"/><line x1="0" y1="1732.60" x2="651" y2="1526.23"/><line x1="0" y1="1744.70" x2="651" y2="1538.33"/><line x1="0" y1="1756.80" x2="651" y2="1550.43"/><line x1="0" y1="1768.90" x2="651" y2="1562.53"/><line x1="0" y1="1781.00" x2="651" y2="1574.63"/><line x1="0" y1="1793.10" x2="651" y2="1586.73"/><line x1="0" y1="1805.20" x2="651" y2="1598.83"/><line x1="0" y1="1817.30" x2="651" y2="1610.93"/><line x1="0" y1="1841.50" x2="651" y2="1635.13"/><line x1="0" y1="1853.60" x2="651" y2="1647.23"/><line x1="0" y1="1865.70" x2="651" y2="1659.33"/><line x1="0" y1="1877.80" x2="651" y2="1671.43"/><line x1="0" y1="1889.90" x2="651" y2="1683.53"/><line x1="0" y1="1902.00" x2="651" y2="1695.63"/><line x1="0" y1="1914.10" x2="651" y2="1707.73"/><line x1="0" y1="1926.20" x2="651" y2="1719.83"/><line x1="0" y1="1938.30" x2="651" y2="1731.93"/></g>
<g stroke="#c8c8c8" stroke-width="1" opacity="0.23" shape-rendering="crispEdges"><line x1="0" y1="-1409.90" x2="651" y2="-1227.62"/><line x1="0" y1="-1295.60" x2="651" y2="-1113.32"/><line x1="0" y1="-1181.30" x2="651" y2="-999.02"/><line x1="0" y1="-1067.00" x2="651" y2="-884.72"/><line x1="0" y1="-952.70" x2="651" y2="-770.42"/><line x1="0" y1="-838.40" x2="651" y2="-656.12"/><line x1="0" y1="-724.10" x2="651" y2="-541.82"/><line x1="0" y1="-609.80" x2="651" y2="-427.52"/><line x1="0" y1="-495.50" x2="651" y2="-313.22"/><line x1="0" y1="-381.20" x2="651" y2="-198.92"/><line x1="0" y1="-266.90" x2="651" y2="-84.62"/><line x1="0" y1="-152.60" x2="651" y2="29.68"/><line x1="0" y1="-38.30" x2="651" y2="143.98"/><line x1="0" y1="76.00" x2="651" y2="258.28"/><line x1="0" y1="190.30" x2="651" y2="372.58"/><line x1="0" y1="304.60" x2="651" y2="486.88"/><line x1="0" y1="418.90" x2="651" y2="601.18"/><line x1="0" y1="533.20" x2="651" y2="715.48"/><line x1="0" y1="647.50" x2="651" y2="829.78"/><line x1="0" y1="761.80" x2="651" y2="944.08"/><line x1="0" y1="876.10" x2="651" y2="1058.38"/><line x1="0" y1="990.40" x2="651" y2="1172.68"/><line x1="0" y1="1104.70" x2="651" y2="1286.98"/><line x1="0" y1="1219.00" x2="651" y2="1401.28"/><line x1="0" y1="1333.30" x2="651" y2="1515.58"/><line x1="0" y1="1447.60" x2="651" y2="1629.88"/><line x1="0" y1="1561.90" x2="651" y2="1744.18"/><line x1="0" y1="1676.20" x2="651" y2="1858.48"/></g>
<g stroke="#c8c8c8" stroke-width="1" opacity="0.23" shape-rendering="crispEdges"><line x1="0" y1="-1437.60" x2="651" y2="-1643.97"/><line x1="0" y1="-1316.60" x2="651" y2="-1522.97"/><line x1="0" y1="-1195.60" x2="651" y2="-1401.97"/><line x1="0" y1="-1074.60" x2="651" y2="-1280.97"/><line x1="0" y1="-953.60" x2="651" y2="-1159.97"/><line x1="0" y1="-832.60" x2="651" y2="-1038.97"/><line x1="0" y1="-711.60" x2="651" y2="-917.97"/><line x1="0" y1="-590.60" x2="651" y2="-796.97"/><line x1="0" y1="-469.60" x2="651" y2="-675.97"/><line x1="0" y1="-348.60" x2="651" y2="-554.97"/><line x1="0" y1="-227.60" x2="651" y2="-433.97"/><line x1="0" y1="-106.60" x2="651" y2="-312.97"/><line x1="0" y1="14.40" x2="651" y2="-191.97"/><line x1="0" y1="135.40" x2="651" y2="-70.97"/><line x1="0" y1="256.40" x2="651" y2="50.03"/><line x1="0" y1="377.40" x2="651" y2="171.03"/><line x1="0" y1="498.40" x2="651" y2="292.03"/><line x1="0" y1="619.40" x2="651" y2="413.03"/><line x1="0" y1="740.40" x2="651" y2="534.03"/><line x1="0" y1="861.40" x2="651" y2="655.03"/><line x1="0" y1="982.40" x2="651" y2="776.03"/><line x1="0" y1="1103.40" x2="651" y2="897.03"/><line x1="0" y1="1224.40" x2="651" y2="1018.03"/><line x1="0" y1="1345.40" x2="651" y2="1139.03"/><line x1="0" y1="1466.40" x2="651" y2="1260.03"/><line x1="0" y1="1587.40" x2="651" y2="1381.03"/><line x1="0" y1="1708.40" x2="651" y2="1502.03"/><line x1="0" y1="1829.40" x2="651" y2="1623.03"/></g>
</g>
</svg>
</div>
<svg class="i" style="left:534px;top:96px" width="32" height="18" viewBox="0 0 32 18" ><path d="M1 17.5 L8 1 L15 17.5Z" fill="#f5c99c"/><path d="M8 2 L15 17.5 L11 17.5Z" fill="#f8dcc0" opacity="0.6"/><path d="M1 17.5 L8 1 L15 17.5" fill="none" stroke="#b03a10" stroke-width="1" stroke-dasharray="1.2 1.6"/><path d="M21 17.5 L22 6 L31 17.5Z" fill="#f5c99c"/><path d="M21 17.5 L22 6 L31 17.5" fill="none" stroke="#b03a10" stroke-width="1" stroke-dasharray="1.2 1.6"/></svg>
<svg class="i" style="left:778px;top:16px" width="68" height="76" viewBox="0 0 68 76" ><defs><linearGradient id="gc" x1="0" x2="1"><stop offset="0" stop-color="#9a9a9a"/><stop offset="0.5" stop-color="#e0e0e0"/><stop offset="1" stop-color="#9a9a9a"/></linearGradient><linearGradient id="gg" x1="0" x2="1"><stop offset="0" stop-color="#2a8a14"/><stop offset="0.45" stop-color="#6cff3c"/><stop offset="1" stop-color="#2a8a14"/></linearGradient></defs><path d="M33 5.5 L35.5 12.5 M39 5.5 L35 15" stroke="#fff" stroke-width="1.7" fill="none"/><path d="M4.5 31.5 L9.5 37 M9.5 31.5 L4.5 37" stroke="#fff" stroke-width="1.8" fill="none"/><path d="M4.5 48.5 H9.5 L4.5 54 H9.5" stroke="#fff" stroke-width="1.6" fill="none"/><path d="M44.6 38.6 L56 29.7 L56 41.6Z" fill="#c9c9c9"/><ellipse cx="56.5" cy="35.6" rx="2.8" ry="6" fill="#d6d6d6"/><path d="M42.6 44 L55 41.6 L55 54Z" fill="#6e6e6e"/><ellipse cx="55.5" cy="47.8" rx="4.2" ry="6.2" fill="#a3a3a3"/><path d="M36.1 52 L30.2 68 L42.1 68Z" fill="url(#gc)"/><ellipse cx="36.1" cy="68" rx="6" ry="2" fill="#bdbdbd"/><path d="M27 38 L36 34.2 L44.6 38 L44.6 48 L36 51 L27 48Z" fill="#d9d9d9"/><path d="M27 38 L36 34.2 L44.6 38 L36 40.5Z" fill="#6f6f6f"/><path d="M36.1 33 L30.2 17 L42.1 17Z" fill="url(#gg)"/><ellipse cx="36.1" cy="17" rx="6" ry="2.2" fill="#2f7a1c"/><path d="M27.5 39.6 L14 31.2 L14 42.6Z" fill="#d41a1a"/><ellipse cx="14" cy="36.9" rx="2.4" ry="5.7" fill="#e52222"/><path d="M27.5 39.6 L15 32 L16 35Z" fill="#f04040"/><path d="M29.7 44 L16.5 42 L16.5 54.5Z" fill="#0e2e8a"/><ellipse cx="16.8" cy="48.2" rx="4" ry="6.3" fill="#1a3ce6"/></svg>
<svg class="i" style="left:845px;top:19px" width="8" height="10" viewBox="0 0 8 10" ><path d="M1.8 4.5 V3 Q1.8 0.8 4 0.8 Q6.2 0.8 6.2 3 V4.5" fill="none" stroke="#d5dbe6" stroke-width="1.3"/><rect x="0.5" y="4.5" width="7" height="5" fill="#d5dbe6"/></svg>
<svg class="i" style="left:797px;top:104px" width="11" height="9" viewBox="0 0 11 9" ><path d="M0 1.5H10 M0 4.5H10 M0 7.5H10" stroke="#dbe8f6" stroke-width="1"/></svg>
<div class="t" style="left:811px;top:101px;color:#d0cfc8;font-family:Liberation Serif;font-size:12px;letter-spacing:0.8px;opacity:0.85">Iso</div>
<div class="a" style="left:865px;top:0px;width:4px;height:768px;background:#A2A2A2"></div>
<div class="a" style="left:865px;top:0px;width:1px;height:490px;background:#999"></div>
<div class="a" style="left:868px;top:0px;width:1px;height:768px;background:#9a9a9a"></div>
<div class="a" style="left:869px;top:0px;width:104px;height:768px;background:#C2C2C2"></div>
<div class="a" style="left:869px;top:0px;width:104px;height:36px;background:#E0E0E0;border-bottom:1px solid #A3A3A3"></div>
<svg class="i" style="left:876px;top:-2px" width="29" height="27" viewBox="0 0 29 27" ><defs><linearGradient id="fg" x1="0" y1="0" x2="0" y2="1"><stop offset="0" stop-color="#6e7c85"/><stop offset="1" stop-color="#46525a"/></linearGradient><linearGradient id="ft" x1="0" y1="0" x2="0" y2="1"><stop offset="0" stop-color="#e6e6e6"/><stop offset="1" stop-color="#b4b4b4"/></linearGradient></defs><path d="M0.5 8 V4 Q0.5 0.5 4.5 0.5 H8 Q11.5 0.5 12 4 H27 Q28.5 4 28.5 6 V8Z" fill="url(#ft)" stroke="#a0a0a0" stroke-width="0.8"/><path d="M0.5 9 Q0.5 7 2.5 7 H26.5 Q28.5 7 28.5 9 V23 Q28.5 25 26.5 25 H2.5 Q0.5 25 0.5 23Z" fill="url(#fg)"/><path d="M1 7.5 H28" stroke="#9aa4aa" stroke-width="0.8"/></svg>
<div class="t" style="left:914px;top:-4px;font-size:12.5px;letter-spacing:0.9px;line-height:16px;color:#111">kanban</div>
<div class="a" style="left:0px;top:490px;width:865px;height:21px;background:#A5A5A5"></div>
<div class="a" style="left:0px;top:494px;width:71px;height:17px;background:linear-gradient(#ececec,#dedede);border-top:2px solid #4f8fdc"></div>
<svg class="i" style="left:7px;top:498px" width="11" height="9" viewBox="0 0 11 9" ><path d="M0.5 1.5 Q0.5 0.5 1.5 0.5 H4 L5 1.5 H9.5 Q10.5 1.5 10.5 2.5 V7.5 Q10.5 8.5 9.5 8.5 H1.5 Q0.5 8.5 0.5 7.5Z" fill="#8a8a8a" stroke="#555" stroke-width="0.9"/><path d="M1 3H10" stroke="#555" stroke-width="0.8"/></svg>
<div class="t" style="left:22px;top:494px;letter-spacing:0.75px;letter-spacing:0.917px">Project</div>
<svg class="i" style="left:83px;top:497px" width="10" height="11" viewBox="0 0 10 11" ><rect x="0.5" y="0.5" width="9" height="10" fill="#f4f4f4" stroke="#333" stroke-width="1"/><path d="M2 2.5H8 M2 4.5H6.5 M2 6.5H8 M2 8.5H6" stroke="#555" stroke-width="1"/></svg>
<div class="t" style="left:97px;top:494px;letter-spacing:0.6px;color:#222;letter-spacing:0.533px">Console</div>
<div class="a" style="left:0px;top:511px;width:865px;height:18px;background:linear-gradient(#e6e6e6,#d2d2d2);border-bottom:1px solid #9d9d9d"></div>
<div class="a" style="left:6px;top:512px;width:1px;height:16px;background:#aaa"></div>
<div class="a" style="left:58px;top:512px;width:1px;height:16px;background:#aaa"></div>
<div class="t" style="left:13px;top:513px;font-size:9.5px;letter-spacing:0.8px">Create</div>
<svg class="i" style="left:51px;top:519px" width="5" height="3" viewBox="0 0 5 3" ><path d="M0 0H5L2.5 3Z" fill="#555"/></svg>
<div class="a" style="left:0px;top:529px;width:169px;height:239px;background:#C2C2C2"></div>
<div class="a" style="left:0px;top:752px;width:169px;height:16px;background:#8F8F8F"></div>
<div class="a" style="left:0;top:529px;width:169px;height:239px;overflow:hidden">
<svg class="i" style="left:4px;top:6px" width="9" height="8"><path d="M0 0 L9 0 L4.5 7.8Z" fill="#707070"/></svg>
<svg class="i" style="left:16.5px;top:1px" width="15" height="15"><path d="M7.50 0.70 L9.67 4.91 L14.35 5.68 L11.02 9.04 L11.73 13.72 L7.50 11.60 L3.27 13.72 L3.98 9.04 L0.65 5.68 L5.33 4.91Z" fill="#ffd21c" stroke="#8c8060" stroke-width="0.9" stroke-linejoin="round"/><path d="M7.5 3 L8.8 5.8 L12 6.3 L7.5 7.5Z" fill="#ffe98a" opacity="0.6"/></svg>
<div class="t b" style="left:35px;top:1px;color:#000;letter-spacing:1.312px">Favorites</div>
<svg class="i" style="left:29px;top:17px" width="17" height="17"><circle cx="7.6" cy="7" r="5" fill="none" stroke="#8a8470" stroke-width="3.6"/><path d="M11 10.6 L14.6 14.2" stroke="#8a8470" stroke-width="4" stroke-linecap="round"/><circle cx="7.6" cy="7" r="5" fill="none" stroke="#f2d41a" stroke-width="2.2"/><path d="M11.2 10.8 L14.4 14" stroke="#f2d41a" stroke-width="2.4" stroke-linecap="round"/></svg>
<div class="t" style="left:48px;top:17px;color:#000;letter-spacing:0.500px">All Materials</div>
<svg class="i" style="left:29px;top:33px" width="17" height="17"><circle cx="7.6" cy="7" r="5" fill="none" stroke="#8a8470" stroke-width="3.6"/><path d="M11 10.6 L14.6 14.2" stroke="#8a8470" stroke-width="4" stroke-linecap="round"/><circle cx="7.6" cy="7" r="5" fill="none" stroke="#f2d41a" stroke-width="2.2"/><path d="M11.2 10.8 L14.4 14" stroke="#f2d41a" stroke-width="2.4" stroke-linecap="round"/></svg>
<div class="t" style="left:48px;top:33px;color:#000;letter-spacing:0.456px">All Models</div>
<svg class="i" style="left:29px;top:49px" width="17" height="17"><circle cx="7.6" cy="7" r="5" fill="none" stroke="#8a8470" stroke-width="3.6"/><path d="M11 10.6 L14.6 14.2" stroke="#8a8470" stroke-width="4" stroke-linecap="round"/><circle cx="7.6" cy="7" r="5" fill="none" stroke="#f2d41a" stroke-width="2.2"/><path d="M11.2 10.8 L14.4 14" stroke="#f2d41a" stroke-width="2.4" stroke-linecap="round"/></svg>
<div class="t" style="left:48px;top:49px;color:#000;letter-spacing:0.600px">All Prefabs</div>
<svg class="i" style="left:4px;top:85px" width="9" height="8"><path d="M0 0 L9 0 L4.5 7.8Z" fill="#707070"/></svg>
<svg class="i" style="left:17px;top:82px" width="16" height="13"><path d="M0.5 2.5 Q0.5 1 2 1 H6 L7.5 2.5 H14 Q15.5 2.5 15.5 4 V11.5 Q15.5 12.5 14.5 12.5 H1.5 Q0.5 12.5 0.5 11.5Z" fill="#4f5b63" stroke="#3a4247" stroke-width="0.8"/><path d="M1 4 H15 V5.8 H1Z" fill="#dde1e4"/><path d="M1 5.8 H15 V12 H1Z" fill="#6b7880"/></svg>
<div class="t b" style="left:35px;top:80px;color:#000;letter-spacing:0.880px">Assets</div>
<svg class="i" style="left:18px;top:100px" width="8" height="9"><path d="M0 0 L7.7 4.4 L0 8.8Z" fill="#707070"/></svg>
<svg class="i" style="left:30px;top:98px" width="16" height="13"><path d="M0.5 2.5 Q0.5 1 2 1 H6 L7.5 2.5 H14 Q15.5 2.5 15.5 4 V11.5 Q15.5 12.5 14.5 12.5 H1.5 Q0.5 12.5 0.5 11.5Z" fill="#4f5b63" stroke="#3a4247" stroke-width="0.8"/><path d="M1 4 H15 V5.8 H1Z" fill="#dde1e4"/><path d="M1 5.8 H15 V12 H1Z" fill="#6b7880"/></svg>
<div class="t" style="left:48px;top:96px;color:#000;letter-spacing:0.820px">DynamicBone</div>
<svg class="i" style="left:30px;top:114px" width="16" height="13"><path d="M0.5 2.5 Q0.5 1 2 1 H6 L7.5 2.5 H14 Q15.5 2.5 15.5 4 V11.5 Q15.5 12.5 14.5 12.5 H1.5 Q0.5 12.5 0.5 11.5Z" fill="#4f5b63" stroke="#3a4247" stroke-width="0.8"/><path d="M1 4 H15 V5.8 H1Z" fill="#dde1e4"/><path d="M1 5.8 H15 V12 H1Z" fill="#6b7880"/></svg>
<div class="t" style="left:48px;top:112px;color:#000;letter-spacing:0.547px">GamingOutlineShade</div>
<svg class="i" style="left:17px;top:133px" width="9" height="8"><path d="M0 0 L9 0 L4.5 7.8Z" fill="#707070"/></svg>
<svg class="i" style="left:30px;top:130px" width="16" height="13"><path d="M0.5 2.5 Q0.5 1 2 1 H6 L7.5 2.5 H14 Q15.5 2.5 15.5 4 V11.5 Q15.5 12.5 14.5 12.5 H1.5 Q0.5 12.5 0.5 11.5Z" fill="#4f5b63" stroke="#3a4247" stroke-width="0.8"/><path d="M1 4 H15 V5.8 H1Z" fill="#dde1e4"/><path d="M1 5.8 H15 V12 H1Z" fill="#6b7880"/></svg>
<div class="t" style="left:48px;top:128px;color:#000;letter-spacing:0.200px">HEROIC FANTASY CR</div>
<svg class="i" style="left:31px;top:149px" width="9" height="8"><path d="M0 0 L9 0 L4.5 7.8Z" fill="#707070"/></svg>
<svg class="i" style="left:44px;top:146px" width="16" height="13"><path d="M0.5 2.5 Q0.5 1 2 1 H6 L7.5 2.5 H14 Q15.5 2.5 15.5 4 V11.5 Q15.5 12.5 14.5 12.5 H1.5 Q0.5 12.5 0.5 11.5Z" fill="#4f5b63" stroke="#3a4247" stroke-width="0.8"/><path d="M1 4 H15 V5.8 H1Z" fill="#dde1e4"/><path d="M1 5.8 H15 V12 H1Z" fill="#6b7880"/></svg>
<div class="t" style="left:62px;top:144px;color:#000;letter-spacing:0.800px">Black Dragon</div>
<svg class="i" style="left:58px;top:162px" width="16" height="13"><path d="M0.5 2.5 Q0.5 1 2 1 H6 L7.5 2.5 H14 Q15.5 2.5 15.5 4 V11.5 Q15.5 12.5 14.5 12.5 H1.5 Q0.5 12.5 0.5 11.5Z" fill="#4f5b63" stroke="#3a4247" stroke-width="0.8"/><path d="M1 4 H15 V5.8 H1Z" fill="#dde1e4"/><path d="M1 5.8 H15 V12 H1Z" fill="#6b7880"/></svg>
<div class="t" style="left:76px;top:160px;color:#000;letter-spacing:0.225px">FBX Files</div>
<svg class="i" style="left:58px;top:178px" width="16" height="13"><path d="M0.5 2.5 Q0.5 1 2 1 H6 L7.5 2.5 H14 Q15.5 2.5 15.5 4 V11.5 Q15.5 12.5 14.5 12.5 H1.5 Q0.5 12.5 0.5 11.5Z" fill="#4f5b63" stroke="#3a4247" stroke-width="0.8"/><path d="M1 4 H15 V5.8 H1Z" fill="#dde1e4"/><path d="M1 5.8 H15 V12 H1Z" fill="#6b7880"/></svg>
<div class="t" style="left:76px;top:176px;color:#000;letter-spacing:0.600px">Materials</div>
<svg class="i" style="left:58px;top:194px" width="16" height="13"><path d="M0.5 2.5 Q0.5 1 2 1 H6 L7.5 2.5 H14 Q15.5 2.5 15.5 4 V11.5 Q15.5 12.5 14.5 12.5 H1.5 Q0.5 12.5 0.5 11.5Z" fill="#4f5b63" stroke="#3a4247" stroke-width="0.8"/><path d="M1 4 H15 V5.8 H1Z" fill="#dde1e4"/><path d="M1 5.8 H15 V12 H1Z" fill="#6b7880"/></svg>
<div class="t" style="left:76px;top:192px;color:#000;letter-spacing:0.667px">Prefabs</div>
<svg class="i" style="left:58px;top:210px" width="16" height="13"><path d="M0.5 2.5 Q0.5 1 2 1 H6 L7.5 2.5 H14 Q15.5 2.5 15.5 4 V11.5 Q15.5 12.5 14.5 12.5 H1.5 Q0.5 12.5 0.5 11.5Z" fill="#4f5b63" stroke="#3a4247" stroke-width="0.8"/><path d="M1 4 H15 V5.8 H1Z" fill="#dde1e4"/><path d="M1 5.8 H15 V12 H1Z" fill="#6b7880"/></svg>
<div class="t" style="left:76px;top:208px;color:#000;letter-spacing:0.971px">Textures</div>
<svg class="i" style="left:30px;top:225px" width="16" height="13"><path d="M0.5 2.5 Q0.5 1 2 1 H6 L7.5 2.5 H14 Q15.5 2.5 15.5 4 V11.5 Q15.5 12.5 14.5 12.5 H1.5 Q0.5 12.5 0.5 11.5Z" fill="#4f5b63" stroke="#3a4247" stroke-width="0.8"/><path d="M1 4 H15 V5.8 H1Z" fill="#dde1e4"/><path d="M1 5.8 H15 V12 H1Z" fill="#6b7880"/></svg>
<div class="t" style="left:48px;top:223px;color:#f4f4f4;letter-spacing:0.820px">kanban</div>
</div>
<div class="a" style="left:169px;top:529px;width:14px;height:239px;background:#E4E4E4;border-left:1px solid #B5B5B5;border-right:1px solid #A8A8A8"></div>
<svg class="i" style="left:174px;top:535px" width="7" height="5" viewBox="0 0 7 5" ><path d="M0 5H7L3.5 0Z" fill="#333"/></svg>
<div class="a" style="left:171px;top:546px;width:12px;height:84px;background:linear-gradient(90deg,#6f84a6,#9fb2cf 40%,#8aa0c2 70%,#6c7fa0);border:1px solid #4d5e7a;border-radius:6px"></div>
<div class="a" style="left:183px;top:529px;width:682px;height:239px;background:#C2C2C2"></div>
<div class="a" style="left:183px;top:529px;width:682px;height:18px;background:#E0E0E0;border-bottom:1px solid #A6A6A6"></div>
<div class="t" style="left:190px;top:530px;letter-spacing:0.45px;letter-spacing:0.520px">Assets</div>
<svg class="i" style="left:234px;top:534px" width="6" height="9" viewBox="0 0 6 9" ><path d="M0.8 0.8 L5 4.5 L0.8 8.2" fill="none" stroke="#888" stroke-width="1.3"/></svg>
<div class="t b" style="left:248px;top:530px;letter-spacing:1.1px;letter-spacing:1.700px">kanban</div>
<div class="a" style="left:200px;top:573px;width:64px;height:32px;background:#5e2a10;box-shadow:0 1px 2px rgba(0,0,0,0.35);overflow:hidden"><div class="a" style="left:0;top:0;width:49px;height:12px;background:#070505"></div><div class="a" style="left:49px;top:0;width:15px;height:15px;background:linear-gradient(90deg,#4e200c,#7a3a1a 30%,#5a2810 60%,#743616)"></div><div class="a" style="left:0;top:12px;width:30px;height:20px;background:linear-gradient(#9a5228 0,#7a3a18 2px,#6a3012 8px,#80401c 13px,#62300f 20px)"></div><div class="a" style="left:30px;top:12px;width:19px;height:3px;background:linear-gradient(#9a5228,#6e3414)"></div><div class="a" style="left:30px;top:15px;width:31px;height:17px;background:#f8f8f6"></div><div class="a" style="left:33px;top:19px;width:3px;height:3px;background:#5aa85a"></div><div class="a" style="left:37px;top:18px;width:4px;height:4px;background:#3c8c3c"></div><div class="a" style="left:42px;top:18px;width:4px;height:4px;background:#3c8c3c"></div><div class="a" style="left:33px;top:25px;width:25px;height:3px;background:repeating-linear-gradient(90deg,#58a858 0 3px,#b8dcb8 3px 4px)"></div><div class="a" style="left:53px;top:17px;width:7px;height:6px;background:#e4e4e4;border:1px solid #c8c8c8"></div></div>
<div class="a" style="left:278px;top:559px;width:60px;height:60px;background:#555555;box-shadow:0 1px 2px rgba(0,0,0,0.35)"></div>
<svg class="i" style="left:278px;top:559px" width="60" height="60" viewBox="0 0 60 60" ><path d="M16.7 6.5 L45.2 8.1 L44.4 27.3 L17 22.5Z" fill="#8993a4"/><path d="M29.3 4 V52.7" stroke="#8d97a8" stroke-width="1.2"/><path d="M29.3 8 V25" stroke="#a7b0bf" stroke-width="0.8" stroke-dasharray="1 1"/></svg>
<svg class="i" style="left:331px;top:580px" width="16" height="16" viewBox="0 0 16 16" ><circle cx="8" cy="8" r="6.8" fill="#5a5a5a" stroke="#e8e8e8" stroke-width="1.3"/><path d="M6 4.8 L11 8 L6 11.2Z" fill="#fff"/></svg>
<svg class="i" style="left:200px;top:625px" width="63" height="10" viewBox="0 0 63 10" ><path transform="translate(0.00,0) scale(0.818)" d="M0.8 1.2V3 M0.8 1.2H10.2V3 M2.6 3.8H8.4 M3.2 3.8L2.4 7 H9.6 Q9.6 10 7.6 10.2 M1 8.6H7.4" fill="none" stroke="#111" stroke-width="1.0" stroke-linecap="square"/><path transform="translate(8.80,0) scale(0.818)" d="M1 1.6H10 M5.5 0.3V3 M3 3.2H8V7.4H3Z M3 4.6H8 M3 6H8 M0.6 8.2H10.4 M3.6 9L1.6 10.6 M7.4 9L9.4 10.6" fill="none" stroke="#111" stroke-width="1.0" stroke-linecap="square"/><path transform="translate(17.60,0) scale(0.818)" d="M0.4 3.4H3.6 M2 0.5V10Q2 10.6 1.2 10.4 M0.4 7.6L3.6 6.2 M4.6 0.8H9.8V3.4H4.6Z M4.6 2.1H9.8 M4 4.4H10.6 M4.8 4.4V10.4 M4.8 6.4H7 M4.8 8.2H7 M7.6 5.6H10.2Q9.6 8.6 7.6 10.4 M8 6.6Q9 9 10.6 10.4" fill="none" stroke="#111" stroke-width="1.0" stroke-linecap="square"/><path transform="translate(26.40,0) scale(0.818)" d="M2.4 5.2Q5.8 4 7.8 5.6Q8.8 8.4 4.4 9.6" fill="none" stroke="#111" stroke-width="1.0" stroke-linecap="square"/><path transform="translate(35.20,0) scale(0.818)" d="M1.2 2.2H9.6 Q5.6 3.4 5.2 6.5 Q5 9.4 7.6 9.8" fill="none" stroke="#111" stroke-width="1.0" stroke-linecap="square"/><path transform="translate(44.00,0) scale(0.818)" d="M2.2 2.2Q1.4 7 2.8 9 Q3.6 9.6 4.2 8.2 M7.6 3Q9.4 5 9.6 7.6" fill="none" stroke="#111" stroke-width="1.0" stroke-linecap="square"/><path transform="translate(52.80,0) scale(0.818)" d="M2.2 2.2Q1.4 7 2.8 9 Q3.6 9.6 4.2 8.2 M7.6 3Q9.4 5 9.6 7.6" fill="none" stroke="#111" stroke-width="1.0" stroke-linecap="square"/></svg>
<svg class="i" style="left:290px;top:625px" width="38" height="10" viewBox="0 0 38 10" ><path transform="translate(0.00,0) scale(0.818)" d="M5.5 0.3V2 M1.2 2.8H9.8 M3.2 4.4L4.2 8.6 M7.8 4.4L6.8 8.6 M0.6 9.6H10.4" fill="none" stroke="#111" stroke-width="1.0" stroke-linecap="square"/><path transform="translate(9.00,0) scale(0.818)" d="M1.2 2.2H9.6 Q5.6 3.4 5.2 6.5 Q5 9.4 7.6 9.8" fill="none" stroke="#111" stroke-width="1.0" stroke-linecap="square"/><path transform="translate(18.00,0) scale(0.818)" d="M2.4 0.8L8.8 0.4 M2 2.5H9 M1 4.2H10 M5.6 1L2 10.4 M3.8 5.8H8.6V10.4H3.8 M3.8 7.3H8.6 M3.8 8.8H8.6" fill="none" stroke="#111" stroke-width="1.0" stroke-linecap="square"/><path transform="translate(27.00,0) scale(0.818)" d="M0.4 3.4H4.4 M2.4 0.4V10.6 M2.4 3.8L0.4 8 M2.6 4L4.4 6.2 M5 1.4H10.6 M5.6 1.4V5.6Q5.5 8.5 4.6 10.4 M5.8 4.6H10Q9 8 5.6 10.4 M6.8 5.8Q8.6 8.6 10.6 10.2" fill="none" stroke="#111" stroke-width="1.0" stroke-linecap="square"/></svg>
<div class="a" style="left:210px;top:0px;width:1px;height:491px;background:#8C8C8C"></div>
<div class="a" style="left:0px;top:490px;width:211px;height:1px;background:#8C8C8C"></div>
<div class="a" style="left:213px;top:8px;width:1px;height:483px;background:#8E8E8E"></div>
<div class="a" style="left:213px;top:490px;width:653px;height:1px;background:#8E8E8E"></div>
<div class="menu" style="left:421px;top:113px;width:286px;height:480px"></div>
<div class="a" style="left:425px;top:114px;width:26px;height:478px;background-image:radial-gradient(circle at 1px 1px,rgba(0,0,0,0.035) 0.7px,transparent 0.8px);background-size:2px 2px"></div>
<div class="mi hl" style="left:424px;top:116px;width:280px"><span class="tx" style="letter-spacing:-0.550px">Create</span><svg style="right:5px;top:7px" width="7" height="9" viewBox="0 0 7 9"><path d="M1.5 1 L5 4.5 L1.5 8" fill="none" stroke="#333" stroke-width="1.3"/></svg></div>
<div class="mi" style="left:424px;top:138px;width:280px"><span class="tx" style="letter-spacing:-0.100px">Show in Explorer</span></div>
<div class="mi" style="left:424px;top:160px;width:280px"><span class="tx" style="letter-spacing:0.050px">Open</span></div>
<div class="mi" style="left:424px;top:182px;width:280px"><span class="tx" style="letter-spacing:0.150px">Delete</span></div>
<div class="mi" style="left:424px;top:204px;width:280px"><span class="tx" style="letter-spacing:-0.270px">Rename</span></div>
<div class="mi" style="left:424px;top:226px;width:280px"><span class="tx" style="letter-spacing:-0.106px">Copy Path</span><span class="sc" style="right:13.7px;letter-spacing:0.33px">Alt+Ctrl+C</span></div>
<div class="sep" style="left:452px;top:251px;width:252px"></div>
<div class="mi dis" style="left:424px;top:255px;width:280px"><span class="tx" style="letter-spacing:-0.036px">Open Scene Additive</span></div>
<div class="sep" style="left:452px;top:280px;width:252px"></div>
<div class="mi" style="left:424px;top:284px;width:280px"><span class="tx" style="letter-spacing:0.003px">Import New Asset...</span></div>
<div class="mi" style="left:424px;top:306px;width:280px"><span class="tx" style="letter-spacing:-0.027px">Import Package</span><svg style="right:5px;top:7px" width="7" height="9" viewBox="0 0 7 9"><path d="M1.5 1 L5 4.5 L1.5 8" fill="none" stroke="#333" stroke-width="1.3"/></svg></div>
<div class="mi" style="left:424px;top:328px;width:280px"><span class="tx" style="letter-spacing:-0.178px">Export Package...</span></div>
<div class="mi dis" style="left:424px;top:350px;width:280px"><span class="tx" style="letter-spacing:-0.280px">Find References In Scene</span></div>
<div class="mi" style="left:424px;top:372px;width:280px"><span class="tx" style="letter-spacing:-0.181px">Select Dependencies</span></div>
<div class="sep" style="left:452px;top:397px;width:252px"></div>
<div class="mi" style="left:424px;top:401px;width:280px"><span class="tx" style="letter-spacing:-0.142px">Refresh</span><span class="sc" style="right:14px">Ctrl+R</span></div>
<div class="mi" style="left:424px;top:423px;width:280px"><span class="tx" style="letter-spacing:0.071px">Reimport</span></div>
<div class="sep" style="left:452px;top:448px;width:252px"></div>
<div class="mi" style="left:424px;top:452px;width:280px"><span class="tx" style="letter-spacing:0.195px">Reimport All</span></div>
<div class="sep" style="left:452px;top:477px;width:252px"></div>
<div class="mi dis" style="left:424px;top:481px;width:280px"><span class="tx" style="letter-spacing:-0.197px">Extract From Prefab</span></div>
<div class="sep" style="left:452px;top:506px;width:252px"></div>
<div class="mi dis" style="left:424px;top:510px;width:280px"><span class="tx" style="letter-spacing:-0.109px">Run API Updater...</span></div>
<div class="sep" style="left:452px;top:535px;width:252px"></div>
<div class="mi" style="left:424px;top:539px;width:280px"><span class="tx" style="letter-spacing:-0.315px">Update UIElements Schema</span></div>
<div class="sep" style="left:452px;top:564px;width:252px"></div>
<div class="mi" style="left:424px;top:568px;width:280px"><span class="tx" style="letter-spacing:-0.182px">Open C# Project</span></div>
<div class="menu" style="left:704px;top:113px;width:241px;height:670px"></div>
<div class="a" style="left:708px;top:114px;width:26px;height:668px;background-image:radial-gradient(circle at 1px 1px,rgba(0,0,0,0.035) 0.7px,transparent 0.8px);background-size:2px 2px"></div>
<div class="mi" style="left:707px;top:116px;width:235px"><span class="tx" style="letter-spacing:-0.700px">VRChat</span><svg style="right:6px;top:6px" width="7" height="9" viewBox="0 0 7 9"><path d="M1.5 1 L5 4.5 L1.5 8" fill="none" stroke="#333" stroke-width="1.3"/></svg></div>
<div class="sep" style="left:735px;top:141px;width:207px"></div>
<div class="mi" style="left:707px;top:145px;width:235px"><span class="tx" style="letter-spacing:0.180px">Folder</span></div>
<div class="sep" style="left:735px;top:170px;width:207px"></div>
<div class="mi" style="left:707px;top:174px;width:235px"><span class="tx" style="letter-spacing:-0.200px">C# Script</span></div>
<div class="mi" style="left:707px;top:196px;width:235px"><span class="tx" style="letter-spacing:-0.240px">Shader</span><svg style="right:6px;top:6px" width="7" height="9" viewBox="0 0 7 9"><path d="M1.5 1 L5 4.5 L1.5 8" fill="none" stroke="#333" stroke-width="1.3"/></svg></div>
<div class="mi" style="left:707px;top:218px;width:235px"><span class="tx" style="letter-spacing:0.067px">Testing</span><svg style="right:6px;top:6px" width="7" height="9" viewBox="0 0 7 9"><path d="M1.5 1 L5 4.5 L1.5 8" fill="none" stroke="#333" stroke-width="1.3"/></svg></div>
<div class="mi" style="left:707px;top:240px;width:235px"><span class="tx" style="letter-spacing:-0.138px">Playables</span><svg style="right:6px;top:6px" width="7" height="9" viewBox="0 0 7 9"><path d="M1.5 1 L5 4.5 L1.5 8" fill="none" stroke="#333" stroke-width="1.3"/></svg></div>
<div class="mi" style="left:707px;top:262px;width:235px"><span class="tx" style="letter-spacing:0.006px">Assembly Definition</span></div>
<div class="mi" style="left:707px;top:284px;width:235px"><span class="tx" style="letter-spacing:-0.130px">TextMeshPro</span><svg style="right:6px;top:6px" width="7" height="9" viewBox="0 0 7 9"><path d="M1.5 1 L5 4.5 L1.5 8" fill="none" stroke="#333" stroke-width="1.3"/></svg></div>
<div class="sep" style="left:735px;top:309px;width:207px"></div>
<div class="mi" style="left:707px;top:313px;width:235px"><span class="tx" style="letter-spacing:-0.300px">Scene</span></div>
<div class="mi dis" style="left:707px;top:335px;width:235px"><span class="tx" style="letter-spacing:-0.085px">Prefab Variant</span></div>
<div class="sep" style="left:735px;top:360px;width:207px"></div>
<div class="mi" style="left:707px;top:364px;width:235px"><span class="tx" style="letter-spacing:0.300px">Audio Mixer</span></div>
<div class="sep" style="left:735px;top:389px;width:207px"></div>
<div class="mi hl" style="left:707px;top:393px;width:235px"><span class="tx" style="letter-spacing:0.150px">Material</span></div>
<div class="mi" style="left:707px;top:415px;width:235px"><span class="tx" style="letter-spacing:-0.267px">Lens Flare</span></div>
<div class="mi" style="left:707px;top:437px;width:235px"><span class="tx" style="letter-spacing:-0.177px">Render Texture</span></div>
<div class="mi" style="left:707px;top:459px;width:235px"><span class="tx" style="letter-spacing:-0.144px">Lightmap Parameters</span></div>
<div class="mi" style="left:707px;top:481px;width:235px"><span class="tx" style="letter-spacing:-0.210px">Custom Render Texture</span></div>
<div class="sep" style="left:735px;top:506px;width:207px"></div>
<div class="mi" style="left:707px;top:510px;width:235px"><span class="tx" style="letter-spacing:-0.027px">Sprite Atlas</span></div>
<div class="mi" style="left:707px;top:532px;width:235px"><span class="tx" style="letter-spacing:-0.033px">Sprites</span><svg style="right:6px;top:6px" width="7" height="9" viewBox="0 0 7 9"><path d="M1.5 1 L5 4.5 L1.5 8" fill="none" stroke="#333" stroke-width="1.3"/></svg></div>
<div class="mi" style="left:707px;top:554px;width:235px"><span class="tx" style="letter-spacing:-0.100px">Tile</span></div>
<div class="sep" style="left:735px;top:579px;width:207px"></div>
<div class="mi" style="left:707px;top:583px;width:235px"><span class="tx" style="letter-spacing:0.061px">Animator Controller</span></div>
<div class="mi" style="left:707px;top:605px;width:235px"><span class="tx" style="letter-spacing:0.262px">Animation</span></div>
<div class="mi" style="left:707px;top:627px;width:235px"><span class="tx" style="letter-spacing:-0.015px">Animator Override Controller</span></div>
<div class="mi" style="left:707px;top:649px;width:235px"><span class="tx" style="letter-spacing:-0.145px">Avatar Mask</span></div>
<div class="sep" style="left:735px;top:674px;width:207px"></div>
<div class="mi" style="left:707px;top:678px;width:235px"><span class="tx" style="letter-spacing:-0.043px">Timeline</span></div>
<div class="sep" style="left:735px;top:703px;width:207px"></div>
<div class="mi" style="left:707px;top:707px;width:235px"><span class="tx" style="letter-spacing:0.007px">Physic Material</span></div>
<div class="mi" style="left:707px;top:729px;width:235px"><span class="tx" style="letter-spacing:-0.108px">Physics Material 2D</span></div>
<div class="sep" style="left:735px;top:754px;width:207px"></div>
<div class="mi" style="left:707px;top:758px;width:235px"><span class="tx" style="letter-spacing:-0.150px">GUI Skin</span></div>
</body></html>
